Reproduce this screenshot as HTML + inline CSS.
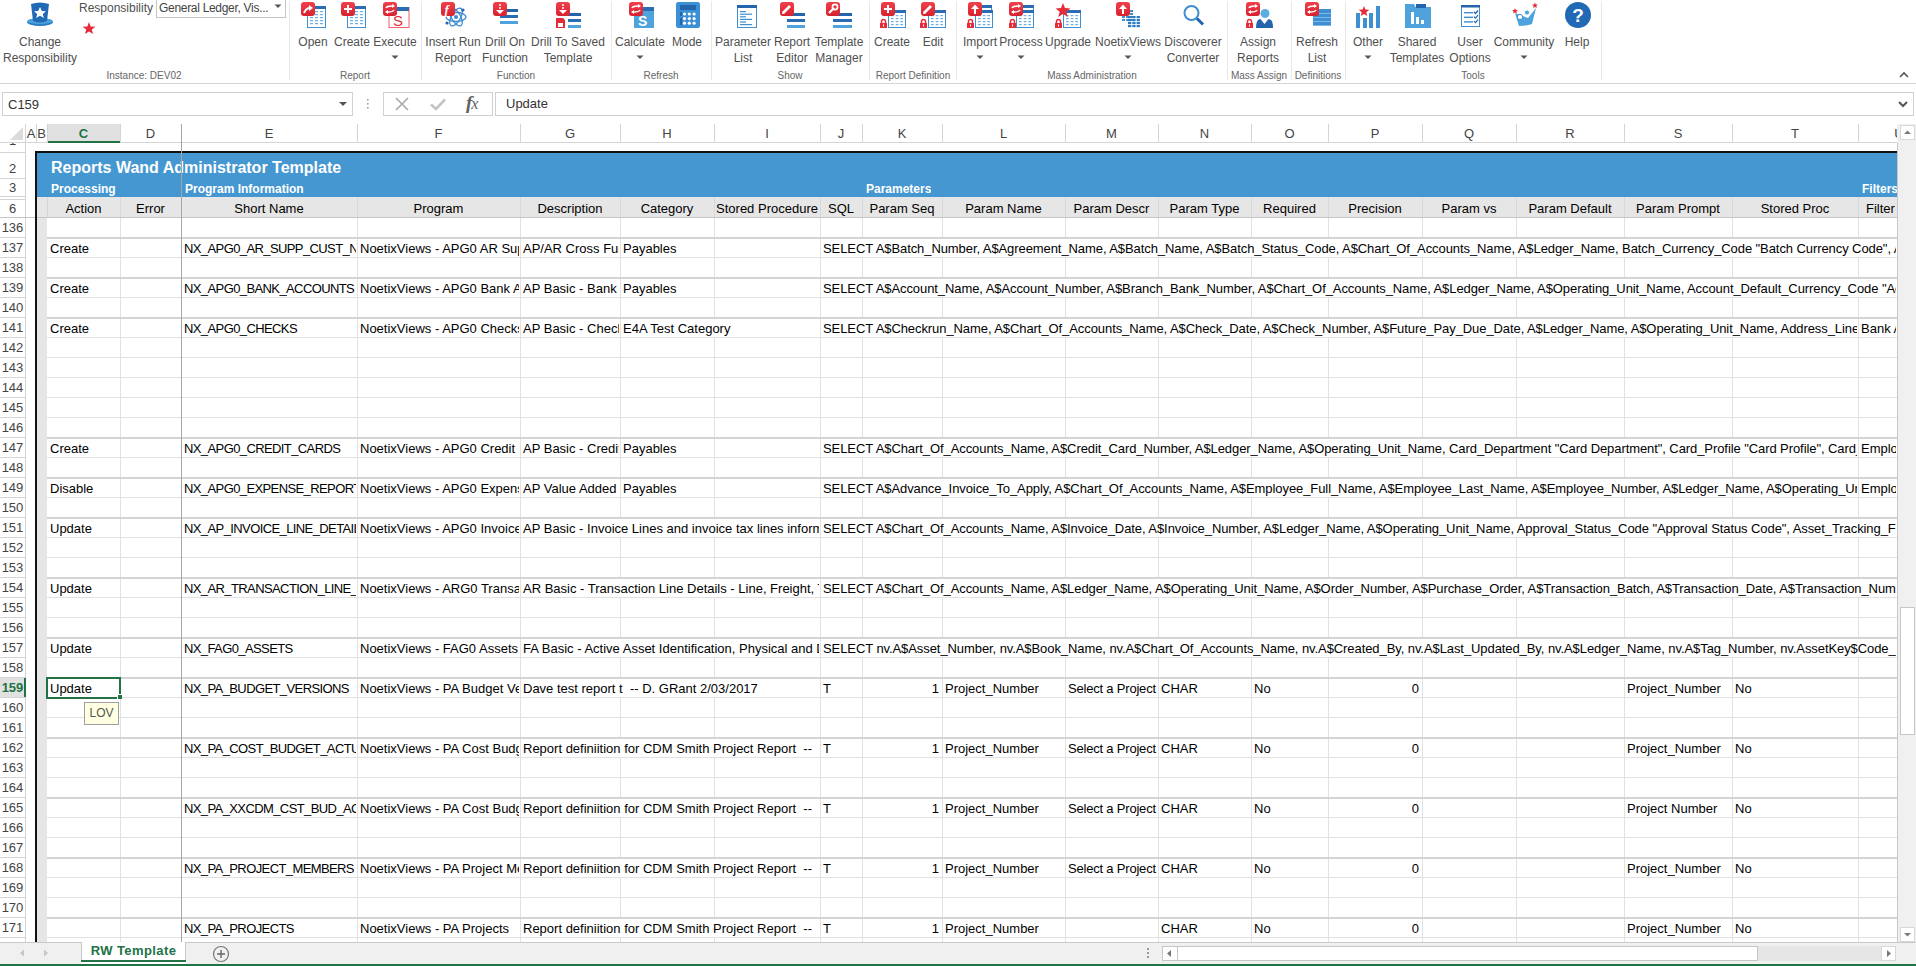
<!DOCTYPE html>
<html><head><meta charset="utf-8"><title>RW Template</title>
<style>
html,body{margin:0;padding:0;}
body{width:1916px;height:966px;position:relative;overflow:hidden;background:#fff;font-family:'Liberation Sans', sans-serif;}
</style></head><body>
<div style="position:absolute;left:0px;top:0px;width:1916px;height:83px;background:#fff"></div>
<div style="position:absolute;left:0px;top:83px;width:1916px;height:1px;background:#d5d5d5"></div>
<div style="position:absolute;left:289px;top:1px;width:1px;height:79px;background:#e8e8e8"></div>
<div style="position:absolute;left:421px;top:1px;width:1px;height:79px;background:#e8e8e8"></div>
<div style="position:absolute;left:611px;top:1px;width:1px;height:79px;background:#e8e8e8"></div>
<div style="position:absolute;left:711px;top:1px;width:1px;height:79px;background:#e8e8e8"></div>
<div style="position:absolute;left:869px;top:1px;width:1px;height:79px;background:#e8e8e8"></div>
<div style="position:absolute;left:956px;top:1px;width:1px;height:79px;background:#e8e8e8"></div>
<div style="position:absolute;left:1227px;top:1px;width:1px;height:79px;background:#e8e8e8"></div>
<div style="position:absolute;left:1291px;top:1px;width:1px;height:79px;background:#e8e8e8"></div>
<div style="position:absolute;left:1345px;top:1px;width:1px;height:79px;background:#e8e8e8"></div>
<div style="position:absolute;left:1601px;top:1px;width:1px;height:79px;background:#e8e8e8"></div>
<div style="position:absolute;left:-20px;top:34px;width:120px;text-align:center;font:12px/16px 'Liberation Sans', sans-serif;color:#505050;white-space:nowrap">Change</div>
<div style="position:absolute;left:-20px;top:50px;width:120px;text-align:center;font:12px/16px 'Liberation Sans', sans-serif;color:#505050;white-space:nowrap">Responsibility</div>
<div style="position:absolute;left:253px;top:34px;width:120px;text-align:center;font:12px/16px 'Liberation Sans', sans-serif;color:#505050;white-space:nowrap">Open</div>
<div style="position:absolute;left:292px;top:34px;width:120px;text-align:center;font:12px/16px 'Liberation Sans', sans-serif;color:#505050;white-space:nowrap">Create</div>
<div style="position:absolute;left:335px;top:34px;width:120px;text-align:center;font:12px/16px 'Liberation Sans', sans-serif;color:#505050;white-space:nowrap">Execute</div>
<svg style="position:absolute;left:391px;top:55px" width="8" height="5"><polygon points="0.5,0.5 7.5,0.5 4,4" fill="#555"/></svg>
<div style="position:absolute;left:393px;top:34px;width:120px;text-align:center;font:12px/16px 'Liberation Sans', sans-serif;color:#505050;white-space:nowrap">Insert Run</div>
<div style="position:absolute;left:393px;top:50px;width:120px;text-align:center;font:12px/16px 'Liberation Sans', sans-serif;color:#505050;white-space:nowrap">Report</div>
<div style="position:absolute;left:445px;top:34px;width:120px;text-align:center;font:12px/16px 'Liberation Sans', sans-serif;color:#505050;white-space:nowrap">Drill On</div>
<div style="position:absolute;left:445px;top:50px;width:120px;text-align:center;font:12px/16px 'Liberation Sans', sans-serif;color:#505050;white-space:nowrap">Function</div>
<div style="position:absolute;left:508px;top:34px;width:120px;text-align:center;font:12px/16px 'Liberation Sans', sans-serif;color:#505050;white-space:nowrap">Drill To Saved</div>
<div style="position:absolute;left:508px;top:50px;width:120px;text-align:center;font:12px/16px 'Liberation Sans', sans-serif;color:#505050;white-space:nowrap">Template</div>
<div style="position:absolute;left:580px;top:34px;width:120px;text-align:center;font:12px/16px 'Liberation Sans', sans-serif;color:#505050;white-space:nowrap">Calculate</div>
<svg style="position:absolute;left:636px;top:55px" width="8" height="5"><polygon points="0.5,0.5 7.5,0.5 4,4" fill="#555"/></svg>
<div style="position:absolute;left:627px;top:34px;width:120px;text-align:center;font:12px/16px 'Liberation Sans', sans-serif;color:#505050;white-space:nowrap">Mode</div>
<div style="position:absolute;left:683px;top:34px;width:120px;text-align:center;font:12px/16px 'Liberation Sans', sans-serif;color:#505050;white-space:nowrap">Parameter</div>
<div style="position:absolute;left:683px;top:50px;width:120px;text-align:center;font:12px/16px 'Liberation Sans', sans-serif;color:#505050;white-space:nowrap">List</div>
<div style="position:absolute;left:732px;top:34px;width:120px;text-align:center;font:12px/16px 'Liberation Sans', sans-serif;color:#505050;white-space:nowrap">Report</div>
<div style="position:absolute;left:732px;top:50px;width:120px;text-align:center;font:12px/16px 'Liberation Sans', sans-serif;color:#505050;white-space:nowrap">Editor</div>
<div style="position:absolute;left:779px;top:34px;width:120px;text-align:center;font:12px/16px 'Liberation Sans', sans-serif;color:#505050;white-space:nowrap">Template</div>
<div style="position:absolute;left:779px;top:50px;width:120px;text-align:center;font:12px/16px 'Liberation Sans', sans-serif;color:#505050;white-space:nowrap">Manager</div>
<div style="position:absolute;left:832px;top:34px;width:120px;text-align:center;font:12px/16px 'Liberation Sans', sans-serif;color:#505050;white-space:nowrap">Create</div>
<div style="position:absolute;left:873px;top:34px;width:120px;text-align:center;font:12px/16px 'Liberation Sans', sans-serif;color:#505050;white-space:nowrap">Edit</div>
<div style="position:absolute;left:920px;top:34px;width:120px;text-align:center;font:12px/16px 'Liberation Sans', sans-serif;color:#505050;white-space:nowrap">Import</div>
<svg style="position:absolute;left:976px;top:55px" width="8" height="5"><polygon points="0.5,0.5 7.5,0.5 4,4" fill="#555"/></svg>
<div style="position:absolute;left:961px;top:34px;width:120px;text-align:center;font:12px/16px 'Liberation Sans', sans-serif;color:#505050;white-space:nowrap">Process</div>
<svg style="position:absolute;left:1017px;top:55px" width="8" height="5"><polygon points="0.5,0.5 7.5,0.5 4,4" fill="#555"/></svg>
<div style="position:absolute;left:1008px;top:34px;width:120px;text-align:center;font:12px/16px 'Liberation Sans', sans-serif;color:#505050;white-space:nowrap">Upgrade</div>
<div style="position:absolute;left:1068px;top:34px;width:120px;text-align:center;font:12px/16px 'Liberation Sans', sans-serif;color:#505050;white-space:nowrap">NoetixViews</div>
<svg style="position:absolute;left:1124px;top:55px" width="8" height="5"><polygon points="0.5,0.5 7.5,0.5 4,4" fill="#555"/></svg>
<div style="position:absolute;left:1133px;top:34px;width:120px;text-align:center;font:12px/16px 'Liberation Sans', sans-serif;color:#505050;white-space:nowrap">Discoverer</div>
<div style="position:absolute;left:1133px;top:50px;width:120px;text-align:center;font:12px/16px 'Liberation Sans', sans-serif;color:#505050;white-space:nowrap">Converter</div>
<div style="position:absolute;left:1198px;top:34px;width:120px;text-align:center;font:12px/16px 'Liberation Sans', sans-serif;color:#505050;white-space:nowrap">Assign</div>
<div style="position:absolute;left:1198px;top:50px;width:120px;text-align:center;font:12px/16px 'Liberation Sans', sans-serif;color:#505050;white-space:nowrap">Reports</div>
<div style="position:absolute;left:1257px;top:34px;width:120px;text-align:center;font:12px/16px 'Liberation Sans', sans-serif;color:#505050;white-space:nowrap">Refresh</div>
<div style="position:absolute;left:1257px;top:50px;width:120px;text-align:center;font:12px/16px 'Liberation Sans', sans-serif;color:#505050;white-space:nowrap">List</div>
<div style="position:absolute;left:1308px;top:34px;width:120px;text-align:center;font:12px/16px 'Liberation Sans', sans-serif;color:#505050;white-space:nowrap">Other</div>
<svg style="position:absolute;left:1364px;top:55px" width="8" height="5"><polygon points="0.5,0.5 7.5,0.5 4,4" fill="#555"/></svg>
<div style="position:absolute;left:1357px;top:34px;width:120px;text-align:center;font:12px/16px 'Liberation Sans', sans-serif;color:#505050;white-space:nowrap">Shared</div>
<div style="position:absolute;left:1357px;top:50px;width:120px;text-align:center;font:12px/16px 'Liberation Sans', sans-serif;color:#505050;white-space:nowrap">Templates</div>
<div style="position:absolute;left:1410px;top:34px;width:120px;text-align:center;font:12px/16px 'Liberation Sans', sans-serif;color:#505050;white-space:nowrap">User</div>
<div style="position:absolute;left:1410px;top:50px;width:120px;text-align:center;font:12px/16px 'Liberation Sans', sans-serif;color:#505050;white-space:nowrap">Options</div>
<div style="position:absolute;left:1464px;top:34px;width:120px;text-align:center;font:12px/16px 'Liberation Sans', sans-serif;color:#505050;white-space:nowrap">Community</div>
<svg style="position:absolute;left:1520px;top:55px" width="8" height="5"><polygon points="0.5,0.5 7.5,0.5 4,4" fill="#555"/></svg>
<div style="position:absolute;left:1517px;top:34px;width:120px;text-align:center;font:12px/16px 'Liberation Sans', sans-serif;color:#505050;white-space:nowrap">Help</div>
<div style="position:absolute;left:64px;top:68px;width:160px;text-align:center;font:10px/16px 'Liberation Sans', sans-serif;color:#666;white-space:nowrap">Instance: DEV02</div>
<div style="position:absolute;left:275px;top:68px;width:160px;text-align:center;font:10px/16px 'Liberation Sans', sans-serif;color:#666;white-space:nowrap">Report</div>
<div style="position:absolute;left:436px;top:68px;width:160px;text-align:center;font:10px/16px 'Liberation Sans', sans-serif;color:#666;white-space:nowrap">Function</div>
<div style="position:absolute;left:581px;top:68px;width:160px;text-align:center;font:10px/16px 'Liberation Sans', sans-serif;color:#666;white-space:nowrap">Refresh</div>
<div style="position:absolute;left:710px;top:68px;width:160px;text-align:center;font:10px/16px 'Liberation Sans', sans-serif;color:#666;white-space:nowrap">Show</div>
<div style="position:absolute;left:833px;top:68px;width:160px;text-align:center;font:10px/16px 'Liberation Sans', sans-serif;color:#666;white-space:nowrap">Report Definition</div>
<div style="position:absolute;left:1012px;top:68px;width:160px;text-align:center;font:10px/16px 'Liberation Sans', sans-serif;color:#666;white-space:nowrap">Mass Administration</div>
<div style="position:absolute;left:1179px;top:68px;width:160px;text-align:center;font:10px/16px 'Liberation Sans', sans-serif;color:#666;white-space:nowrap">Mass Assign</div>
<div style="position:absolute;left:1238px;top:68px;width:160px;text-align:center;font:10px/16px 'Liberation Sans', sans-serif;color:#666;white-space:nowrap">Definitions</div>
<div style="position:absolute;left:1393px;top:68px;width:160px;text-align:center;font:10px/16px 'Liberation Sans', sans-serif;color:#666;white-space:nowrap">Tools</div>
<div style="position:absolute;left:79px;top:0px;font:12px/16px 'Liberation Sans', sans-serif;color:#505050;white-space:nowrap">Responsibility</div>
<div style="position:absolute;left:156px;top:0px;width:130px;height:18px;background:#fff;border:1px solid #c6c6c6;border-top:0;box-sizing:border-box"></div>
<div style="position:absolute;left:159px;top:0px;font:12px/16px 'Liberation Sans', sans-serif;color:#444;white-space:nowrap;letter-spacing:-0.3px">General Ledger, Vis...</div>
<svg style="position:absolute;left:274px;top:4px" width="8" height="5"><polygon points="0.5,0.5 7.5,0.5 4,4" fill="#555"/></svg>
<svg style="position:absolute;left:1897px;top:70px" width="14" height="10"><path d="M3 7 L7 3 L11 7" stroke="#555" stroke-width="1.6" fill="none"/></svg>
<svg style="position:absolute;left:0;top:0" width="1916" height="84"><defs><linearGradient id="rg" x1="0" y1="0" x2="0" y2="1"><stop offset="0" stop-color="#f0404c"/><stop offset="1" stop-color="#d8212f"/></linearGradient></defs><ellipse cx="40" cy="22" rx="13" ry="4" fill="#2a7cc4"/><ellipse cx="40" cy="21" rx="12.5" ry="3" fill="#4ba2dc"/><path d="M31 4 Q40 1 49 4 L47 21 Q40 24 33 21 Z" fill="#2168b5"/><polygon points="40,7 41.8,11 46,11.3 42.8,14 43.8,18 40,15.8 36.2,18 37.2,14 34,11.3 38.2,11" fill="#fff"/><polygon points="89,22 90.7,26.5 95.5,26.7 91.8,29.6 93,34 89,31.5 85,34 86.2,29.6 82.5,26.7 87.3,26.5" fill="#e42d3a"/><rect x="307.5" y="6.5" width="18" height="21" fill="#fff" stroke="#3f8fd2"/><rect x="307" y="6" width="19" height="3" fill="#2a6db5"/><rect x="310.0" y="11" width="3.0" height="1.2" fill="#6fb0e4"/><rect x="315.0" y="11" width="3.0" height="1.2" fill="#6fb0e4"/><rect x="320.0" y="11" width="3.0" height="1.2" fill="#6fb0e4"/><rect x="310.0" y="14" width="3.0" height="1.2" fill="#6fb0e4"/><rect x="315.0" y="14" width="3.0" height="1.2" fill="#6fb0e4"/><rect x="320.0" y="14" width="3.0" height="1.2" fill="#6fb0e4"/><rect x="310.0" y="17" width="3.0" height="1.2" fill="#6fb0e4"/><rect x="315.0" y="17" width="3.0" height="1.2" fill="#6fb0e4"/><rect x="320.0" y="17" width="3.0" height="1.2" fill="#6fb0e4"/><rect x="310.0" y="20" width="3.0" height="1.2" fill="#6fb0e4"/><rect x="315.0" y="20" width="3.0" height="1.2" fill="#6fb0e4"/><rect x="320.0" y="20" width="3.0" height="1.2" fill="#6fb0e4"/><rect x="310.0" y="23" width="3.0" height="1.2" fill="#6fb0e4"/><rect x="315.0" y="23" width="3.0" height="1.2" fill="#6fb0e4"/><rect x="320.0" y="23" width="3.0" height="1.2" fill="#6fb0e4"/><rect x="301" y="2" width="14" height="14" rx="3" fill="url(#rg)"/><path d="M304 13 Q306 8 310 8" stroke="#fff" stroke-width="2" fill="none"/><polygon points="309,5 313,8 309,11" fill="#fff"/><rect x="347.5" y="6.5" width="18" height="21" fill="#fff" stroke="#3f8fd2"/><rect x="347" y="6" width="19" height="3" fill="#2a6db5"/><rect x="350.0" y="11" width="3.0" height="1.2" fill="#6fb0e4"/><rect x="355.0" y="11" width="3.0" height="1.2" fill="#6fb0e4"/><rect x="360.0" y="11" width="3.0" height="1.2" fill="#6fb0e4"/><rect x="350.0" y="14" width="3.0" height="1.2" fill="#6fb0e4"/><rect x="355.0" y="14" width="3.0" height="1.2" fill="#6fb0e4"/><rect x="360.0" y="14" width="3.0" height="1.2" fill="#6fb0e4"/><rect x="350.0" y="17" width="3.0" height="1.2" fill="#6fb0e4"/><rect x="355.0" y="17" width="3.0" height="1.2" fill="#6fb0e4"/><rect x="360.0" y="17" width="3.0" height="1.2" fill="#6fb0e4"/><rect x="350.0" y="20" width="3.0" height="1.2" fill="#6fb0e4"/><rect x="355.0" y="20" width="3.0" height="1.2" fill="#6fb0e4"/><rect x="360.0" y="20" width="3.0" height="1.2" fill="#6fb0e4"/><rect x="350.0" y="23" width="3.0" height="1.2" fill="#6fb0e4"/><rect x="355.0" y="23" width="3.0" height="1.2" fill="#6fb0e4"/><rect x="360.0" y="23" width="3.0" height="1.2" fill="#6fb0e4"/><rect x="341" y="2" width="14" height="14" rx="3" fill="url(#rg)"/><path d="M348 5v8M344 9h8" stroke="#fff" stroke-width="2"/><rect x="389" y="7.5" width="20" height="20" fill="#fff" stroke="#f0606a"/><rect x="389" y="7" width="20" height="4" fill="#2a6db5"/><text x="393" y="26" font-family="Liberation Sans" font-size="15" fill="#e42d3a">S</text><rect x="383" y="2" width="14" height="14" rx="3" fill="url(#rg)"/><path d="M386 8 Q387 6 392 6" stroke="#fff" stroke-width="1.6" fill="none"/><polygon points="392,4 395,6 392,8" fill="#fff"/><path d="M394 10 Q393 12 388 12" stroke="#fff" stroke-width="1.6" fill="none"/><polygon points="388,10 385,12 388,14" fill="#fff"/><g fill="none" stroke="#3b8ad0" stroke-width="1.3"><ellipse cx="456" cy="17" rx="10" ry="4.5" transform="rotate(60 456 17)"/><ellipse cx="456" cy="17" rx="10" ry="4.5" transform="rotate(-60 456 17)"/><ellipse cx="456" cy="17" rx="10" ry="4.5"/></g><circle cx="456" cy="17" r="2" fill="#3b8ad0"/><circle cx="447" cy="23" r="1.6" fill="#2364ad"/><circle cx="463" cy="10" r="1.6" fill="#2364ad"/><rect x="441" y="2" width="14" height="14" rx="3" fill="url(#rg)"/><text x="444.5" y="14" font-family="Liberation Serif" font-style="italic" font-weight="bold" font-size="13" fill="#fff">f</text><rect x="500" y="9" width="18" height="3" fill="#2364ad"/><rect x="500" y="15" width="18" height="3" fill="#2a6db5"/><rect x="500" y="21" width="18" height="3" fill="#4ea3dc"/><rect x="493" y="2" width="14" height="14" rx="3" fill="url(#rg)"/><path d="M500 4v2M500 7v2" stroke="#fff" stroke-width="1.5"/><polygon points="496,10 504,10 500,14" fill="#fff"/><rect x="568" y="13" width="13" height="3" fill="#2364ad"/><rect x="568" y="19" width="13" height="3" fill="#2a6db5"/><rect x="568" y="25" width="13" height="3" fill="#4ea3dc"/><path d="M556 18 h7 l2 2 v8 h-9 z" fill="#e42d3a"/><rect x="558" y="23" width="5" height="4" fill="#fff"/><rect x="556" y="2" width="14" height="14" rx="3" fill="url(#rg)"/><path d="M563 4v2M563 7v2" stroke="#fff" stroke-width="1.5"/><polygon points="559,10 567,10 563,14" fill="#fff"/><rect x="634" y="7" width="20" height="21" fill="#4ea3dc"/><rect x="634" y="7" width="20" height="4" fill="#2a6db5"/><text x="638" y="26" font-family="Liberation Sans" font-weight="bold" font-size="14" fill="#fff">S</text><rect x="629" y="2" width="14" height="14" rx="3" fill="url(#rg)"/><path d="M632 8 Q633 6 638 6" stroke="#fff" stroke-width="1.6" fill="none"/><polygon points="638,4 641,6 638,8" fill="#fff"/><path d="M640 10 Q639 12 634 12" stroke="#fff" stroke-width="1.6" fill="none"/><polygon points="634,10 631,12 634,14" fill="#fff"/><rect x="676" y="2" width="24" height="26" rx="2.5" fill="#3b8fd4"/><rect x="680" y="5" width="16" height="5" fill="#2364ad"/><circle cx="684.5" cy="14.0" r="1.6" fill="#fff"/><circle cx="684.5" cy="18.6" r="1.6" fill="#fff"/><circle cx="684.5" cy="23.2" r="1.6" fill="#fff"/><circle cx="689.3" cy="14.0" r="1.6" fill="#fff"/><circle cx="689.3" cy="18.6" r="1.6" fill="#fff"/><circle cx="689.3" cy="23.2" r="1.6" fill="#fff"/><circle cx="694.1" cy="14.0" r="1.6" fill="#fff"/><circle cx="694.1" cy="18.6" r="1.6" fill="#fff"/><circle cx="694.1" cy="23.2" r="1.6" fill="#fff"/><rect x="680" y="12" width="2" height="4" fill="#2364ad"/><rect x="680" y="18" width="2" height="7" fill="#2364ad"/><rect x="737.5" y="5.5" width="19" height="22" fill="#fff" stroke="#3f8fd2"/><rect x="737" y="5" width="20" height="3" fill="#2364ad"/><rect x="740" y="11.0" width="6" height="1.2" fill="#3f8fd2"/><rect x="740" y="13.6" width="12" height="1.2" fill="#3f8fd2"/><rect x="740" y="16.2" width="6" height="1.2" fill="#3f8fd2"/><rect x="740" y="18.8" width="12" height="1.2" fill="#3f8fd2"/><rect x="740" y="21.4" width="6" height="1.2" fill="#3f8fd2"/><rect x="740" y="24.0" width="12" height="1.2" fill="#3f8fd2"/><rect x="787" y="13" width="18" height="3" fill="#2364ad"/><rect x="787" y="19" width="18" height="3" fill="#2a6db5"/><rect x="787" y="25" width="18" height="3" fill="#4ea3dc"/><rect x="780" y="2" width="14" height="14" rx="3" fill="url(#rg)"/><path d="M783 13 L790 6" stroke="#fff" stroke-width="2.6"/><polygon points="782,14 782.5,11.5 784.5,13.5" fill="#fff"/><rect x="833" y="13" width="19" height="3" fill="#2364ad"/><rect x="833" y="19" width="19" height="3" fill="#2a6db5"/><rect x="833" y="25" width="19" height="3" fill="#4ea3dc"/><rect x="826" y="2" width="14" height="14" rx="3" fill="url(#rg)"/><path d="M829 13 L834 8" stroke="#fff" stroke-width="2.2"/><circle cx="835" cy="7" r="2.6" fill="none" stroke="#fff" stroke-width="1.6"/><rect x="888.5" y="10.5" width="17" height="17" fill="#fff" stroke="#3f8fd2"/><rect x="888" y="10" width="18" height="3" fill="#2a6db5"/><rect x="891.0" y="15" width="2.7" height="1.2" fill="#6fb0e4"/><rect x="895.7" y="15" width="2.7" height="1.2" fill="#6fb0e4"/><rect x="900.3" y="15" width="2.7" height="1.2" fill="#6fb0e4"/><rect x="891.0" y="18" width="2.7" height="1.2" fill="#6fb0e4"/><rect x="895.7" y="18" width="2.7" height="1.2" fill="#6fb0e4"/><rect x="900.3" y="18" width="2.7" height="1.2" fill="#6fb0e4"/><rect x="891.0" y="21" width="2.7" height="1.2" fill="#6fb0e4"/><rect x="895.7" y="21" width="2.7" height="1.2" fill="#6fb0e4"/><rect x="900.3" y="21" width="2.7" height="1.2" fill="#6fb0e4"/><rect x="891.0" y="24" width="2.7" height="1.2" fill="#6fb0e4"/><rect x="895.7" y="24" width="2.7" height="1.2" fill="#6fb0e4"/><rect x="900.3" y="24" width="2.7" height="1.2" fill="#6fb0e4"/><path d="M881.5 23 v-1.5 a2 2 0 0 1 4 0 v1.5" stroke="#e42d3a" stroke-width="1.5" fill="none"/><rect x="880" y="23" width="7" height="5" fill="#e42d3a"/><rect x="883" y="24.5" width="1" height="2" fill="#fff"/><rect x="881" y="2" width="14" height="14" rx="3" fill="url(#rg)"/><path d="M888 5v8M884 9h8" stroke="#fff" stroke-width="2"/><rect x="928.5" y="10.5" width="17" height="17" fill="#fff" stroke="#3f8fd2"/><rect x="928" y="10" width="18" height="3" fill="#2a6db5"/><rect x="931.0" y="15" width="2.7" height="1.2" fill="#6fb0e4"/><rect x="935.7" y="15" width="2.7" height="1.2" fill="#6fb0e4"/><rect x="940.3" y="15" width="2.7" height="1.2" fill="#6fb0e4"/><rect x="931.0" y="18" width="2.7" height="1.2" fill="#6fb0e4"/><rect x="935.7" y="18" width="2.7" height="1.2" fill="#6fb0e4"/><rect x="940.3" y="18" width="2.7" height="1.2" fill="#6fb0e4"/><rect x="931.0" y="21" width="2.7" height="1.2" fill="#6fb0e4"/><rect x="935.7" y="21" width="2.7" height="1.2" fill="#6fb0e4"/><rect x="940.3" y="21" width="2.7" height="1.2" fill="#6fb0e4"/><rect x="931.0" y="24" width="2.7" height="1.2" fill="#6fb0e4"/><rect x="935.7" y="24" width="2.7" height="1.2" fill="#6fb0e4"/><rect x="940.3" y="24" width="2.7" height="1.2" fill="#6fb0e4"/><path d="M921.5 23 v-1.5 a2 2 0 0 1 4 0 v1.5" stroke="#e42d3a" stroke-width="1.5" fill="none"/><rect x="920" y="23" width="7" height="5" fill="#e42d3a"/><rect x="923" y="24.5" width="1" height="2" fill="#fff"/><rect x="921" y="2" width="14" height="14" rx="3" fill="url(#rg)"/><path d="M924 13 L931 6" stroke="#fff" stroke-width="2.6"/><polygon points="923,14 923.5,11.5 925.5,13.5" fill="#fff"/><rect x="978.5" y="5.5" width="13" height="9" fill="#fff" stroke="#3f8fd2"/><rect x="978" y="5" width="14" height="3" fill="#2a6db5"/><rect x="981.0" y="10" width="1.3" height="1.2" fill="#6fb0e4"/><rect x="984.3" y="10" width="1.3" height="1.2" fill="#6fb0e4"/><rect x="987.7" y="10" width="1.3" height="1.2" fill="#6fb0e4"/><rect x="975.5" y="10.5" width="17" height="17" fill="#fff" stroke="#3f8fd2"/><rect x="975" y="10" width="18" height="3" fill="#2a6db5"/><rect x="978.0" y="15" width="2.7" height="1.2" fill="#6fb0e4"/><rect x="982.7" y="15" width="2.7" height="1.2" fill="#6fb0e4"/><rect x="987.3" y="15" width="2.7" height="1.2" fill="#6fb0e4"/><rect x="978.0" y="18" width="2.7" height="1.2" fill="#6fb0e4"/><rect x="982.7" y="18" width="2.7" height="1.2" fill="#6fb0e4"/><rect x="987.3" y="18" width="2.7" height="1.2" fill="#6fb0e4"/><rect x="978.0" y="21" width="2.7" height="1.2" fill="#6fb0e4"/><rect x="982.7" y="21" width="2.7" height="1.2" fill="#6fb0e4"/><rect x="987.3" y="21" width="2.7" height="1.2" fill="#6fb0e4"/><rect x="978.0" y="24" width="2.7" height="1.2" fill="#6fb0e4"/><rect x="982.7" y="24" width="2.7" height="1.2" fill="#6fb0e4"/><rect x="987.3" y="24" width="2.7" height="1.2" fill="#6fb0e4"/><path d="M968.5 23 v-1.5 a2 2 0 0 1 4 0 v1.5" stroke="#e42d3a" stroke-width="1.5" fill="none"/><rect x="967" y="23" width="7" height="5" fill="#e42d3a"/><rect x="970" y="24.5" width="1" height="2" fill="#fff"/><rect x="968" y="2" width="14" height="14" rx="3" fill="url(#rg)"/><path d="M975 8v6" stroke="#fff" stroke-width="2"/><polygon points="971,9 979,9 975,4.5" fill="#fff"/><rect x="1020.5" y="5.5" width="13" height="9" fill="#fff" stroke="#3f8fd2"/><rect x="1020" y="5" width="14" height="3" fill="#2a6db5"/><rect x="1023.0" y="10" width="1.3" height="1.2" fill="#6fb0e4"/><rect x="1026.3" y="10" width="1.3" height="1.2" fill="#6fb0e4"/><rect x="1029.7" y="10" width="1.3" height="1.2" fill="#6fb0e4"/><rect x="1016.5" y="10.5" width="17" height="17" fill="#fff" stroke="#3f8fd2"/><rect x="1016" y="10" width="18" height="3" fill="#2a6db5"/><rect x="1019.0" y="15" width="2.7" height="1.2" fill="#6fb0e4"/><rect x="1023.7" y="15" width="2.7" height="1.2" fill="#6fb0e4"/><rect x="1028.3" y="15" width="2.7" height="1.2" fill="#6fb0e4"/><rect x="1019.0" y="18" width="2.7" height="1.2" fill="#6fb0e4"/><rect x="1023.7" y="18" width="2.7" height="1.2" fill="#6fb0e4"/><rect x="1028.3" y="18" width="2.7" height="1.2" fill="#6fb0e4"/><rect x="1019.0" y="21" width="2.7" height="1.2" fill="#6fb0e4"/><rect x="1023.7" y="21" width="2.7" height="1.2" fill="#6fb0e4"/><rect x="1028.3" y="21" width="2.7" height="1.2" fill="#6fb0e4"/><rect x="1019.0" y="24" width="2.7" height="1.2" fill="#6fb0e4"/><rect x="1023.7" y="24" width="2.7" height="1.2" fill="#6fb0e4"/><rect x="1028.3" y="24" width="2.7" height="1.2" fill="#6fb0e4"/><path d="M1010.5 23 v-1.5 a2 2 0 0 1 4 0 v1.5" stroke="#e42d3a" stroke-width="1.5" fill="none"/><rect x="1009" y="23" width="7" height="5" fill="#e42d3a"/><rect x="1012" y="24.5" width="1" height="2" fill="#fff"/><rect x="1009" y="2" width="14" height="14" rx="3" fill="url(#rg)"/><path d="M1012 8 Q1013 6 1018 6" stroke="#fff" stroke-width="1.6" fill="none"/><polygon points="1018,4 1021,6 1018,8" fill="#fff"/><path d="M1020 10 Q1019 12 1014 12" stroke="#fff" stroke-width="1.6" fill="none"/><polygon points="1014,10 1011,12 1014,14" fill="#fff"/><rect x="1063.5" y="10.5" width="17" height="17" fill="#fff" stroke="#3f8fd2"/><rect x="1063" y="10" width="18" height="3" fill="#2a6db5"/><rect x="1066.0" y="15" width="2.7" height="1.2" fill="#6fb0e4"/><rect x="1070.7" y="15" width="2.7" height="1.2" fill="#6fb0e4"/><rect x="1075.3" y="15" width="2.7" height="1.2" fill="#6fb0e4"/><rect x="1066.0" y="18" width="2.7" height="1.2" fill="#6fb0e4"/><rect x="1070.7" y="18" width="2.7" height="1.2" fill="#6fb0e4"/><rect x="1075.3" y="18" width="2.7" height="1.2" fill="#6fb0e4"/><rect x="1066.0" y="21" width="2.7" height="1.2" fill="#6fb0e4"/><rect x="1070.7" y="21" width="2.7" height="1.2" fill="#6fb0e4"/><rect x="1075.3" y="21" width="2.7" height="1.2" fill="#6fb0e4"/><rect x="1066.0" y="24" width="2.7" height="1.2" fill="#6fb0e4"/><rect x="1070.7" y="24" width="2.7" height="1.2" fill="#6fb0e4"/><rect x="1075.3" y="24" width="2.7" height="1.2" fill="#6fb0e4"/><path d="M1056.5 23 v-1.5 a2 2 0 0 1 4 0 v1.5" stroke="#e42d3a" stroke-width="1.5" fill="none"/><rect x="1055" y="23" width="7" height="5" fill="#e42d3a"/><rect x="1058" y="24.5" width="1" height="2" fill="#fff"/><polygon points="1063,3 1065,8 1070.5,8.5 1066.3,11.8 1067.8,17 1063,14 1058.2,17 1059.7,11.8 1055.5,8.5 1061,8" fill="#e42d3a"/><g fill="#3f8fd2"><rect x="1122" y="10" width="3" height="2" /><rect x="1122" y="13" width="3" height="2" /><rect x="1122" y="16" width="3" height="2" /><rect x="1122" y="19" width="3" height="2" /><rect x="1126" y="10" width="3" height="2" /><rect x="1126" y="13" width="3" height="2" /><rect x="1126" y="16" width="3" height="2" /><rect x="1126" y="19" width="3" height="2" /><rect x="1130" y="10" width="3" height="2" /><rect x="1130" y="13" width="3" height="2" /><rect x="1130" y="16" width="3" height="2" /><rect x="1130" y="19" width="3" height="2" /></g><g fill="#2a7cc4"><rect x="1128.0" y="16" width="3.3" height="2.2" /><rect x="1128.0" y="19" width="3.3" height="2.2" /><rect x="1128.0" y="22" width="3.3" height="2.2" /><rect x="1128.0" y="25" width="3.3" height="2.2" /><rect x="1132.3" y="16" width="3.3" height="2.2" /><rect x="1132.3" y="19" width="3.3" height="2.2" /><rect x="1132.3" y="22" width="3.3" height="2.2" /><rect x="1132.3" y="25" width="3.3" height="2.2" /><rect x="1136.6" y="16" width="3.3" height="2.2" /><rect x="1136.6" y="19" width="3.3" height="2.2" /><rect x="1136.6" y="22" width="3.3" height="2.2" /><rect x="1136.6" y="25" width="3.3" height="2.2" /></g><rect x="1116" y="2" width="14" height="14" rx="3" fill="url(#rg)"/><path d="M1123 8v6" stroke="#fff" stroke-width="2"/><polygon points="1119,9 1127,9 1123,4.5" fill="#fff"/><circle cx="1191.5" cy="13" r="7" fill="none" stroke="#3f8fd2" stroke-width="2"/><path d="M1197 18.5 L1203 24.5" stroke="#2364ad" stroke-width="3"/><circle cx="1265" cy="13.5" r="4.5" fill="#5aaee0"/><path d="M1256 28 Q1256 19 1260.5 19 L1264.5 24 L1268.5 19 Q1273 19 1273 28 Z" fill="#2364ad"/><path d="M1247.5 23 v-1.5 a2 2 0 0 1 4 0 v1.5" stroke="#e42d3a" stroke-width="1.5" fill="none"/><rect x="1246" y="23" width="7" height="5" fill="#e42d3a"/><rect x="1249" y="24.5" width="1" height="2" fill="#fff"/><rect x="1246" y="2" width="14" height="14" rx="3" fill="url(#rg)"/><path d="M1249 8 Q1250 6 1255 6" stroke="#fff" stroke-width="1.6" fill="none"/><polygon points="1255,4 1258,6 1255,8" fill="#fff"/><path d="M1257 10 Q1256 12 1251 12" stroke="#fff" stroke-width="1.6" fill="none"/><polygon points="1251,10 1248,12 1251,14" fill="#fff"/><rect x="1313" y="9" width="18" height="17" fill="#3f8fd2"/><rect x="1313" y="13" width="18" height="0.8" fill="#8cc4ec"/><rect x="1313" y="17" width="18" height="0.8" fill="#8cc4ec"/><rect x="1313" y="21" width="18" height="0.8" fill="#8cc4ec"/><rect x="1313" y="25" width="18" height="0.8" fill="#8cc4ec"/><rect x="1305" y="2" width="14" height="14" rx="3" fill="url(#rg)"/><path d="M1308 8 Q1309 6 1314 6" stroke="#fff" stroke-width="1.6" fill="none"/><polygon points="1314,4 1317,6 1314,8" fill="#fff"/><path d="M1316 10 Q1315 12 1310 12" stroke="#fff" stroke-width="1.6" fill="none"/><polygon points="1310,10 1307,12 1310,14" fill="#fff"/><rect x="1356" y="13" width="4" height="15" fill="#3f8fd2"/><rect x="1363" y="18" width="4" height="10" fill="#3f8fd2"/><rect x="1369" y="13" width="4" height="15" fill="#3f8fd2"/><rect x="1376" y="6" width="4" height="22" fill="#3f8fd2"/><polygon points="1364,6 1365.4,9.6 1369.3,9.8 1366.3,12.3 1367.3,16 1364,14 1360.7,16 1361.7,12.3 1358.7,9.8 1362.6,9.6" fill="#e42d3a"/><path d="M1405 4 h9 l1.5 3 h15.5 v21 h-26 z" fill="#4ea3dc"/><rect x="1416" y="4" width="10" height="4" fill="#2364ad"/><rect x="1411" y="12" width="3" height="12" fill="#fff"/><rect x="1416" y="17" width="3" height="7" fill="#fff"/><rect x="1421" y="20" width="3" height="4" fill="#fff"/><rect x="1461.5" y="5.5" width="18" height="21" fill="#fff" stroke="#3f8fd2"/><rect x="1461" y="5" width="19" height="2.5" fill="#2364ad"/><rect x="1464" y="12.0" width="9" height="1.4" fill="#3f8fd2"/><path d="M1474 12.0 l1.5 1.5 l2.5 -3" stroke="#2364ad" stroke-width="1.2" fill="none"/><rect x="1464" y="16.6" width="9" height="1.4" fill="#3f8fd2"/><path d="M1474 16.6 l1.5 1.5 l2.5 -3" stroke="#2364ad" stroke-width="1.2" fill="none"/><rect x="1464" y="21.2" width="9" height="1.4" fill="#3f8fd2"/><path d="M1474 21.2 l1.5 1.5 l2.5 -3" stroke="#2364ad" stroke-width="1.2" fill="none"/><path d="M1515 13 L1519 26 Q1527 26 1532 24 L1536 8 L1528 18 Z" fill="#4ea3dc"/><circle cx="1520" cy="17" r="2.6" fill="#fff" stroke="#3f8fd2"/><circle cx="1527" cy="12.5" r="2.6" fill="#4ea3dc" stroke="#fff"/><polygon points="1515,8 1515.8,10 1518,10.1 1516.3,11.5 1516.9,13.6 1515,12.5 1513.1,13.6 1513.7,11.5 1512,10.1 1514.2,10" fill="#e42d3a"/><polygon points="1535,2.5 1535.8,4.5 1538,4.6 1536.3,6 1536.9,8.1 1535,7 1533.1,8.1 1533.7,6 1532,4.6 1534.2,4.5" fill="#e42d3a"/><circle cx="1578" cy="15" r="13" fill="#2168b5"/><text x="1578" y="21.5" text-anchor="middle" font-family="Liberation Sans" font-weight="bold" font-size="19" fill="#fff">?</text></svg>
<div style="position:absolute;left:0px;top:84px;width:1916px;height:40px;background:#fff"></div>
<div style="position:absolute;left:2px;top:92px;width:351px;height:24px;background:#fff;border:1px solid #d0d0d0;box-sizing:border-box"></div>
<div style="position:absolute;left:8px;top:92px;height:24px;font:13px/24px 'Liberation Sans', sans-serif;color:#333"><span style="position:relative;top:1px">C159</span></div>
<svg style="position:absolute;left:337px;top:99px" width="12" height="10"><polygon points="2,3 10,3 6,7" fill="#555"/></svg>
<svg style="position:absolute;left:365px;top:96px" width="6" height="16"><rect x="2" y="3" width="1.6" height="1.6" fill="#a0a0a0"/><rect x="2" y="7" width="1.6" height="1.6" fill="#a0a0a0"/><rect x="2" y="11" width="1.6" height="1.6" fill="#a0a0a0"/></svg>
<div style="position:absolute;left:383px;top:92px;width:110px;height:24px;background:#fff;border:1px solid #d0d0d0;box-sizing:border-box"></div>
<svg style="position:absolute;left:383px;top:92px" width="110" height="24"><path d="M13 6 L25 18 M25 6 L13 18" stroke="#a8a8a8" stroke-width="1.6"/><path d="M48 12.5 L53 17 L62 7.5" stroke="#c4c4c4" stroke-width="2.6" fill="none"/></svg>
<div style="position:absolute;left:466px;top:92px;height:24px;font:italic bold 19px/24px 'Liberation Serif', serif;color:#606060;letter-spacing:-1px"><span style="position:relative;top:-1px">f<span style="font-size:16px;font-weight:normal">x</span></span></div>
<div style="position:absolute;left:495px;top:92px;width:1419px;height:24px;background:#fff;border:1px solid #d0d0d0;box-sizing:border-box"></div>
<div style="position:absolute;left:506px;top:92px;height:24px;font:13px/24px 'Liberation Sans', sans-serif;color:#333"><span style="position:relative;top:0px">Update</span></div>
<svg style="position:absolute;left:1896px;top:98px" width="14" height="12"><path d="M3 4 L7 8 L11 4" stroke="#555" stroke-width="2" fill="none"/></svg>
<div style="position:absolute;left:0;top:124px;width:1897px;height:19px;background:#fff"></div>
<svg style="position:absolute;left:0;top:124px" width="26" height="19"><polygon points="23,3 23,16 10,16" fill="#dcdcdc"/></svg>
<div style="position:absolute;left:47px;top:124px;width:73px;height:19px;background:#e1e1e1"></div>
<div style="position:absolute;left:47px;top:141px;width:73px;height:2px;background:#217346"></div>
<div style="position:absolute;left:36px;top:124px;width:1px;height:19px;background:#d4d4d4"></div>
<div style="position:absolute;left:47px;top:124px;width:1px;height:19px;background:#d4d4d4"></div>
<div style="position:absolute;left:120px;top:124px;width:1px;height:19px;background:#d4d4d4"></div>
<div style="position:absolute;left:181px;top:124px;width:1px;height:19px;background:#a0a0a0"></div>
<div style="position:absolute;left:357px;top:124px;width:1px;height:19px;background:#d4d4d4"></div>
<div style="position:absolute;left:520px;top:124px;width:1px;height:19px;background:#d4d4d4"></div>
<div style="position:absolute;left:620px;top:124px;width:1px;height:19px;background:#d4d4d4"></div>
<div style="position:absolute;left:714px;top:124px;width:1px;height:19px;background:#d4d4d4"></div>
<div style="position:absolute;left:820px;top:124px;width:1px;height:19px;background:#d4d4d4"></div>
<div style="position:absolute;left:862px;top:124px;width:1px;height:19px;background:#d4d4d4"></div>
<div style="position:absolute;left:942px;top:124px;width:1px;height:19px;background:#d4d4d4"></div>
<div style="position:absolute;left:1065px;top:124px;width:1px;height:19px;background:#d4d4d4"></div>
<div style="position:absolute;left:1158px;top:124px;width:1px;height:19px;background:#d4d4d4"></div>
<div style="position:absolute;left:1251px;top:124px;width:1px;height:19px;background:#d4d4d4"></div>
<div style="position:absolute;left:1328px;top:124px;width:1px;height:19px;background:#d4d4d4"></div>
<div style="position:absolute;left:1422px;top:124px;width:1px;height:19px;background:#d4d4d4"></div>
<div style="position:absolute;left:1516px;top:124px;width:1px;height:19px;background:#d4d4d4"></div>
<div style="position:absolute;left:1624px;top:124px;width:1px;height:19px;background:#d4d4d4"></div>
<div style="position:absolute;left:1732px;top:124px;width:1px;height:19px;background:#d4d4d4"></div>
<div style="position:absolute;left:1858px;top:124px;width:1px;height:19px;background:#d4d4d4"></div>
<div style="position:absolute;left:25px;top:124px;width:1px;height:19px;background:#d4d4d4"></div>
<div style="position:absolute;left:0px;top:142px;width:47px;height:1px;background:#d4d4d4"></div>
<div style="position:absolute;left:120px;top:142px;width:1777px;height:1px;background:#d4d4d4"></div>
<div style="position:absolute;left:26px;top:124px;width:10px;height:17px;line-height:19px;text-align:center;font:13px 'Liberation Sans', sans-serif;color:#444;overflow:hidden"><span style="position:relative;top:2px">A</span></div>
<div style="position:absolute;left:36px;top:124px;width:11px;height:17px;line-height:19px;text-align:center;font:13px 'Liberation Sans', sans-serif;color:#444;overflow:hidden"><span style="position:relative;top:2px">B</span></div>
<div style="position:absolute;left:47px;top:124px;width:73px;height:17px;line-height:19px;text-align:center;font:bold 13px 'Liberation Sans', sans-serif;color:#217346;overflow:hidden"><span style="position:relative;top:2px">C</span></div>
<div style="position:absolute;left:120px;top:124px;width:61px;height:17px;line-height:19px;text-align:center;font:13px 'Liberation Sans', sans-serif;color:#444;overflow:hidden"><span style="position:relative;top:2px">D</span></div>
<div style="position:absolute;left:181px;top:124px;width:176px;height:17px;line-height:19px;text-align:center;font:13px 'Liberation Sans', sans-serif;color:#444;overflow:hidden"><span style="position:relative;top:2px">E</span></div>
<div style="position:absolute;left:357px;top:124px;width:163px;height:17px;line-height:19px;text-align:center;font:13px 'Liberation Sans', sans-serif;color:#444;overflow:hidden"><span style="position:relative;top:2px">F</span></div>
<div style="position:absolute;left:520px;top:124px;width:100px;height:17px;line-height:19px;text-align:center;font:13px 'Liberation Sans', sans-serif;color:#444;overflow:hidden"><span style="position:relative;top:2px">G</span></div>
<div style="position:absolute;left:620px;top:124px;width:94px;height:17px;line-height:19px;text-align:center;font:13px 'Liberation Sans', sans-serif;color:#444;overflow:hidden"><span style="position:relative;top:2px">H</span></div>
<div style="position:absolute;left:714px;top:124px;width:106px;height:17px;line-height:19px;text-align:center;font:13px 'Liberation Sans', sans-serif;color:#444;overflow:hidden"><span style="position:relative;top:2px">I</span></div>
<div style="position:absolute;left:820px;top:124px;width:42px;height:17px;line-height:19px;text-align:center;font:13px 'Liberation Sans', sans-serif;color:#444;overflow:hidden"><span style="position:relative;top:2px">J</span></div>
<div style="position:absolute;left:862px;top:124px;width:80px;height:17px;line-height:19px;text-align:center;font:13px 'Liberation Sans', sans-serif;color:#444;overflow:hidden"><span style="position:relative;top:2px">K</span></div>
<div style="position:absolute;left:942px;top:124px;width:123px;height:17px;line-height:19px;text-align:center;font:13px 'Liberation Sans', sans-serif;color:#444;overflow:hidden"><span style="position:relative;top:2px">L</span></div>
<div style="position:absolute;left:1065px;top:124px;width:93px;height:17px;line-height:19px;text-align:center;font:13px 'Liberation Sans', sans-serif;color:#444;overflow:hidden"><span style="position:relative;top:2px">M</span></div>
<div style="position:absolute;left:1158px;top:124px;width:93px;height:17px;line-height:19px;text-align:center;font:13px 'Liberation Sans', sans-serif;color:#444;overflow:hidden"><span style="position:relative;top:2px">N</span></div>
<div style="position:absolute;left:1251px;top:124px;width:77px;height:17px;line-height:19px;text-align:center;font:13px 'Liberation Sans', sans-serif;color:#444;overflow:hidden"><span style="position:relative;top:2px">O</span></div>
<div style="position:absolute;left:1328px;top:124px;width:94px;height:17px;line-height:19px;text-align:center;font:13px 'Liberation Sans', sans-serif;color:#444;overflow:hidden"><span style="position:relative;top:2px">P</span></div>
<div style="position:absolute;left:1422px;top:124px;width:94px;height:17px;line-height:19px;text-align:center;font:13px 'Liberation Sans', sans-serif;color:#444;overflow:hidden"><span style="position:relative;top:2px">Q</span></div>
<div style="position:absolute;left:1516px;top:124px;width:108px;height:17px;line-height:19px;text-align:center;font:13px 'Liberation Sans', sans-serif;color:#444;overflow:hidden"><span style="position:relative;top:2px">R</span></div>
<div style="position:absolute;left:1624px;top:124px;width:108px;height:17px;line-height:19px;text-align:center;font:13px 'Liberation Sans', sans-serif;color:#444;overflow:hidden"><span style="position:relative;top:2px">S</span></div>
<div style="position:absolute;left:1732px;top:124px;width:126px;height:17px;line-height:19px;text-align:center;font:13px 'Liberation Sans', sans-serif;color:#444;overflow:hidden"><span style="position:relative;top:2px">T</span></div>
<div style="position:absolute;left:1858px;top:124px;width:39px;height:17px;overflow:hidden"><div style="position:absolute;left:1px;top:0;width:80px;line-height:19px;text-align:center;font:13px 'Liberation Sans', sans-serif;color:#444"><span style="position:relative;top:2px">U</span></div></div>
<div style="position:absolute;left:0px;top:143px;width:25px;height:799px;background:#fff"></div>
<div style="position:absolute;left:25px;top:143px;width:1px;height:799px;background:#d4d4d4"></div>
<div style="position:absolute;left:0;top:143px;width:25px;height:9px;overflow:hidden"><div style="position:absolute;left:0;top:-10px;width:25px;height:19px;line-height:19px;text-align:center;font:13px 'Liberation Sans', sans-serif;color:#444">1</div></div>
<div style="position:absolute;left:0px;top:152px;width:25px;height:1px;background:#d4d4d4"></div>
<div style="position:absolute;left:0;top:153px;width:25px;height:25px;"></div>
<div style="position:absolute;left:0;top:153px;width:25px;height:25px;line-height:25px;text-align:center;font:13px 'Liberation Sans', sans-serif;color:#444;overflow:hidden"><span style="position:relative;top:8px">2</span></div>
<div style="position:absolute;left:0px;top:178px;width:25px;height:1px;background:#d4d4d4"></div>
<div style="position:absolute;left:0;top:178px;width:25px;height:18px;"></div>
<div style="position:absolute;left:0;top:178px;width:25px;height:18px;line-height:18px;text-align:center;font:13px 'Liberation Sans', sans-serif;color:#444;overflow:hidden"><span style="position:relative;top:2px">3</span></div>
<div style="position:absolute;left:0px;top:196px;width:25px;height:1px;background:#d4d4d4"></div>
<div style="position:absolute;left:0px;top:199px;width:25px;height:1px;background:#d4d4d4"></div>
<div style="position:absolute;left:0;top:199px;width:25px;height:18px;"></div>
<div style="position:absolute;left:0;top:199px;width:25px;height:18px;line-height:18px;text-align:center;font:13px 'Liberation Sans', sans-serif;color:#444;overflow:hidden"><span style="position:relative;top:2px">6</span></div>
<div style="position:absolute;left:0;top:218px;width:25px;height:19px;"></div>
<div style="position:absolute;left:0;top:218px;width:25px;height:19px;line-height:19px;text-align:center;font:13px 'Liberation Sans', sans-serif;color:#444;overflow:hidden"><span style="position:relative;top:2px">136</span></div>
<div style="position:absolute;left:0px;top:237px;width:25px;height:1px;background:#d4d4d4"></div>
<div style="position:absolute;left:0;top:238px;width:25px;height:19px;"></div>
<div style="position:absolute;left:0;top:238px;width:25px;height:19px;line-height:19px;text-align:center;font:13px 'Liberation Sans', sans-serif;color:#444;overflow:hidden"><span style="position:relative;top:2px">137</span></div>
<div style="position:absolute;left:0px;top:257px;width:25px;height:1px;background:#d4d4d4"></div>
<div style="position:absolute;left:0;top:258px;width:25px;height:19px;"></div>
<div style="position:absolute;left:0;top:258px;width:25px;height:19px;line-height:19px;text-align:center;font:13px 'Liberation Sans', sans-serif;color:#444;overflow:hidden"><span style="position:relative;top:2px">138</span></div>
<div style="position:absolute;left:0px;top:277px;width:25px;height:1px;background:#d4d4d4"></div>
<div style="position:absolute;left:0;top:278px;width:25px;height:19px;"></div>
<div style="position:absolute;left:0;top:278px;width:25px;height:19px;line-height:19px;text-align:center;font:13px 'Liberation Sans', sans-serif;color:#444;overflow:hidden"><span style="position:relative;top:2px">139</span></div>
<div style="position:absolute;left:0px;top:297px;width:25px;height:1px;background:#d4d4d4"></div>
<div style="position:absolute;left:0;top:298px;width:25px;height:19px;"></div>
<div style="position:absolute;left:0;top:298px;width:25px;height:19px;line-height:19px;text-align:center;font:13px 'Liberation Sans', sans-serif;color:#444;overflow:hidden"><span style="position:relative;top:2px">140</span></div>
<div style="position:absolute;left:0px;top:317px;width:25px;height:1px;background:#d4d4d4"></div>
<div style="position:absolute;left:0;top:318px;width:25px;height:19px;"></div>
<div style="position:absolute;left:0;top:318px;width:25px;height:19px;line-height:19px;text-align:center;font:13px 'Liberation Sans', sans-serif;color:#444;overflow:hidden"><span style="position:relative;top:2px">141</span></div>
<div style="position:absolute;left:0px;top:337px;width:25px;height:1px;background:#d4d4d4"></div>
<div style="position:absolute;left:0;top:338px;width:25px;height:19px;"></div>
<div style="position:absolute;left:0;top:338px;width:25px;height:19px;line-height:19px;text-align:center;font:13px 'Liberation Sans', sans-serif;color:#444;overflow:hidden"><span style="position:relative;top:2px">142</span></div>
<div style="position:absolute;left:0px;top:357px;width:25px;height:1px;background:#d4d4d4"></div>
<div style="position:absolute;left:0;top:358px;width:25px;height:19px;"></div>
<div style="position:absolute;left:0;top:358px;width:25px;height:19px;line-height:19px;text-align:center;font:13px 'Liberation Sans', sans-serif;color:#444;overflow:hidden"><span style="position:relative;top:2px">143</span></div>
<div style="position:absolute;left:0px;top:377px;width:25px;height:1px;background:#d4d4d4"></div>
<div style="position:absolute;left:0;top:378px;width:25px;height:19px;"></div>
<div style="position:absolute;left:0;top:378px;width:25px;height:19px;line-height:19px;text-align:center;font:13px 'Liberation Sans', sans-serif;color:#444;overflow:hidden"><span style="position:relative;top:2px">144</span></div>
<div style="position:absolute;left:0px;top:397px;width:25px;height:1px;background:#d4d4d4"></div>
<div style="position:absolute;left:0;top:398px;width:25px;height:19px;"></div>
<div style="position:absolute;left:0;top:398px;width:25px;height:19px;line-height:19px;text-align:center;font:13px 'Liberation Sans', sans-serif;color:#444;overflow:hidden"><span style="position:relative;top:2px">145</span></div>
<div style="position:absolute;left:0px;top:417px;width:25px;height:1px;background:#d4d4d4"></div>
<div style="position:absolute;left:0;top:418px;width:25px;height:19px;"></div>
<div style="position:absolute;left:0;top:418px;width:25px;height:19px;line-height:19px;text-align:center;font:13px 'Liberation Sans', sans-serif;color:#444;overflow:hidden"><span style="position:relative;top:2px">146</span></div>
<div style="position:absolute;left:0px;top:437px;width:25px;height:1px;background:#d4d4d4"></div>
<div style="position:absolute;left:0;top:438px;width:25px;height:19px;"></div>
<div style="position:absolute;left:0;top:438px;width:25px;height:19px;line-height:19px;text-align:center;font:13px 'Liberation Sans', sans-serif;color:#444;overflow:hidden"><span style="position:relative;top:2px">147</span></div>
<div style="position:absolute;left:0px;top:457px;width:25px;height:1px;background:#d4d4d4"></div>
<div style="position:absolute;left:0;top:458px;width:25px;height:19px;"></div>
<div style="position:absolute;left:0;top:458px;width:25px;height:19px;line-height:19px;text-align:center;font:13px 'Liberation Sans', sans-serif;color:#444;overflow:hidden"><span style="position:relative;top:2px">148</span></div>
<div style="position:absolute;left:0px;top:477px;width:25px;height:1px;background:#d4d4d4"></div>
<div style="position:absolute;left:0;top:478px;width:25px;height:19px;"></div>
<div style="position:absolute;left:0;top:478px;width:25px;height:19px;line-height:19px;text-align:center;font:13px 'Liberation Sans', sans-serif;color:#444;overflow:hidden"><span style="position:relative;top:2px">149</span></div>
<div style="position:absolute;left:0px;top:497px;width:25px;height:1px;background:#d4d4d4"></div>
<div style="position:absolute;left:0;top:498px;width:25px;height:19px;"></div>
<div style="position:absolute;left:0;top:498px;width:25px;height:19px;line-height:19px;text-align:center;font:13px 'Liberation Sans', sans-serif;color:#444;overflow:hidden"><span style="position:relative;top:2px">150</span></div>
<div style="position:absolute;left:0px;top:517px;width:25px;height:1px;background:#d4d4d4"></div>
<div style="position:absolute;left:0;top:518px;width:25px;height:19px;"></div>
<div style="position:absolute;left:0;top:518px;width:25px;height:19px;line-height:19px;text-align:center;font:13px 'Liberation Sans', sans-serif;color:#444;overflow:hidden"><span style="position:relative;top:2px">151</span></div>
<div style="position:absolute;left:0px;top:537px;width:25px;height:1px;background:#d4d4d4"></div>
<div style="position:absolute;left:0;top:538px;width:25px;height:19px;"></div>
<div style="position:absolute;left:0;top:538px;width:25px;height:19px;line-height:19px;text-align:center;font:13px 'Liberation Sans', sans-serif;color:#444;overflow:hidden"><span style="position:relative;top:2px">152</span></div>
<div style="position:absolute;left:0px;top:557px;width:25px;height:1px;background:#d4d4d4"></div>
<div style="position:absolute;left:0;top:558px;width:25px;height:19px;"></div>
<div style="position:absolute;left:0;top:558px;width:25px;height:19px;line-height:19px;text-align:center;font:13px 'Liberation Sans', sans-serif;color:#444;overflow:hidden"><span style="position:relative;top:2px">153</span></div>
<div style="position:absolute;left:0px;top:577px;width:25px;height:1px;background:#d4d4d4"></div>
<div style="position:absolute;left:0;top:578px;width:25px;height:19px;"></div>
<div style="position:absolute;left:0;top:578px;width:25px;height:19px;line-height:19px;text-align:center;font:13px 'Liberation Sans', sans-serif;color:#444;overflow:hidden"><span style="position:relative;top:2px">154</span></div>
<div style="position:absolute;left:0px;top:597px;width:25px;height:1px;background:#d4d4d4"></div>
<div style="position:absolute;left:0;top:598px;width:25px;height:19px;"></div>
<div style="position:absolute;left:0;top:598px;width:25px;height:19px;line-height:19px;text-align:center;font:13px 'Liberation Sans', sans-serif;color:#444;overflow:hidden"><span style="position:relative;top:2px">155</span></div>
<div style="position:absolute;left:0px;top:617px;width:25px;height:1px;background:#d4d4d4"></div>
<div style="position:absolute;left:0;top:618px;width:25px;height:19px;"></div>
<div style="position:absolute;left:0;top:618px;width:25px;height:19px;line-height:19px;text-align:center;font:13px 'Liberation Sans', sans-serif;color:#444;overflow:hidden"><span style="position:relative;top:2px">156</span></div>
<div style="position:absolute;left:0px;top:637px;width:25px;height:1px;background:#d4d4d4"></div>
<div style="position:absolute;left:0;top:638px;width:25px;height:19px;"></div>
<div style="position:absolute;left:0;top:638px;width:25px;height:19px;line-height:19px;text-align:center;font:13px 'Liberation Sans', sans-serif;color:#444;overflow:hidden"><span style="position:relative;top:2px">157</span></div>
<div style="position:absolute;left:0px;top:657px;width:25px;height:1px;background:#d4d4d4"></div>
<div style="position:absolute;left:0;top:658px;width:25px;height:19px;"></div>
<div style="position:absolute;left:0;top:658px;width:25px;height:19px;line-height:19px;text-align:center;font:13px 'Liberation Sans', sans-serif;color:#444;overflow:hidden"><span style="position:relative;top:2px">158</span></div>
<div style="position:absolute;left:0px;top:677px;width:25px;height:1px;background:#d4d4d4"></div>
<div style="position:absolute;left:0;top:678px;width:25px;height:19px;background:#e1e1e1;"></div>
<div style="position:absolute;left:0;top:678px;width:25px;height:19px;line-height:19px;text-align:center;font:bold 13px 'Liberation Sans', sans-serif;color:#217346;overflow:hidden"><span style="position:relative;top:2px">159</span></div>
<div style="position:absolute;left:0px;top:697px;width:25px;height:1px;background:#d4d4d4"></div>
<div style="position:absolute;left:0;top:698px;width:25px;height:19px;"></div>
<div style="position:absolute;left:0;top:698px;width:25px;height:19px;line-height:19px;text-align:center;font:13px 'Liberation Sans', sans-serif;color:#444;overflow:hidden"><span style="position:relative;top:2px">160</span></div>
<div style="position:absolute;left:0px;top:717px;width:25px;height:1px;background:#d4d4d4"></div>
<div style="position:absolute;left:0;top:718px;width:25px;height:19px;"></div>
<div style="position:absolute;left:0;top:718px;width:25px;height:19px;line-height:19px;text-align:center;font:13px 'Liberation Sans', sans-serif;color:#444;overflow:hidden"><span style="position:relative;top:2px">161</span></div>
<div style="position:absolute;left:0px;top:737px;width:25px;height:1px;background:#d4d4d4"></div>
<div style="position:absolute;left:0;top:738px;width:25px;height:19px;"></div>
<div style="position:absolute;left:0;top:738px;width:25px;height:19px;line-height:19px;text-align:center;font:13px 'Liberation Sans', sans-serif;color:#444;overflow:hidden"><span style="position:relative;top:2px">162</span></div>
<div style="position:absolute;left:0px;top:757px;width:25px;height:1px;background:#d4d4d4"></div>
<div style="position:absolute;left:0;top:758px;width:25px;height:19px;"></div>
<div style="position:absolute;left:0;top:758px;width:25px;height:19px;line-height:19px;text-align:center;font:13px 'Liberation Sans', sans-serif;color:#444;overflow:hidden"><span style="position:relative;top:2px">163</span></div>
<div style="position:absolute;left:0px;top:777px;width:25px;height:1px;background:#d4d4d4"></div>
<div style="position:absolute;left:0;top:778px;width:25px;height:19px;"></div>
<div style="position:absolute;left:0;top:778px;width:25px;height:19px;line-height:19px;text-align:center;font:13px 'Liberation Sans', sans-serif;color:#444;overflow:hidden"><span style="position:relative;top:2px">164</span></div>
<div style="position:absolute;left:0px;top:797px;width:25px;height:1px;background:#d4d4d4"></div>
<div style="position:absolute;left:0;top:798px;width:25px;height:19px;"></div>
<div style="position:absolute;left:0;top:798px;width:25px;height:19px;line-height:19px;text-align:center;font:13px 'Liberation Sans', sans-serif;color:#444;overflow:hidden"><span style="position:relative;top:2px">165</span></div>
<div style="position:absolute;left:0px;top:817px;width:25px;height:1px;background:#d4d4d4"></div>
<div style="position:absolute;left:0;top:818px;width:25px;height:19px;"></div>
<div style="position:absolute;left:0;top:818px;width:25px;height:19px;line-height:19px;text-align:center;font:13px 'Liberation Sans', sans-serif;color:#444;overflow:hidden"><span style="position:relative;top:2px">166</span></div>
<div style="position:absolute;left:0px;top:837px;width:25px;height:1px;background:#d4d4d4"></div>
<div style="position:absolute;left:0;top:838px;width:25px;height:19px;"></div>
<div style="position:absolute;left:0;top:838px;width:25px;height:19px;line-height:19px;text-align:center;font:13px 'Liberation Sans', sans-serif;color:#444;overflow:hidden"><span style="position:relative;top:2px">167</span></div>
<div style="position:absolute;left:0px;top:857px;width:25px;height:1px;background:#d4d4d4"></div>
<div style="position:absolute;left:0;top:858px;width:25px;height:19px;"></div>
<div style="position:absolute;left:0;top:858px;width:25px;height:19px;line-height:19px;text-align:center;font:13px 'Liberation Sans', sans-serif;color:#444;overflow:hidden"><span style="position:relative;top:2px">168</span></div>
<div style="position:absolute;left:0px;top:877px;width:25px;height:1px;background:#d4d4d4"></div>
<div style="position:absolute;left:0;top:878px;width:25px;height:19px;"></div>
<div style="position:absolute;left:0;top:878px;width:25px;height:19px;line-height:19px;text-align:center;font:13px 'Liberation Sans', sans-serif;color:#444;overflow:hidden"><span style="position:relative;top:2px">169</span></div>
<div style="position:absolute;left:0px;top:897px;width:25px;height:1px;background:#d4d4d4"></div>
<div style="position:absolute;left:0;top:898px;width:25px;height:19px;"></div>
<div style="position:absolute;left:0;top:898px;width:25px;height:19px;line-height:19px;text-align:center;font:13px 'Liberation Sans', sans-serif;color:#444;overflow:hidden"><span style="position:relative;top:2px">170</span></div>
<div style="position:absolute;left:0px;top:917px;width:25px;height:1px;background:#d4d4d4"></div>
<div style="position:absolute;left:0;top:918px;width:25px;height:19px;"></div>
<div style="position:absolute;left:0;top:918px;width:25px;height:19px;line-height:19px;text-align:center;font:13px 'Liberation Sans', sans-serif;color:#444;overflow:hidden"><span style="position:relative;top:2px">171</span></div>
<div style="position:absolute;left:0px;top:937px;width:25px;height:1px;background:#d4d4d4"></div>
<div style="position:absolute;left:0px;top:957px;width:25px;height:1px;background:#d4d4d4"></div>
<div style="position:absolute;left:24px;top:678px;width:2px;height:19px;background:#217346"></div>
<div style="position:absolute;left:26px;top:143px;width:1871px;height:799px;background:#fff"></div>
<div style="position:absolute;left:35px;top:151px;width:1862px;height:2px;background:#111"></div>
<div style="position:absolute;left:35px;top:151px;width:2px;height:791px;background:#111"></div>
<div style="position:absolute;left:37px;top:153px;width:1860px;height:44px;background:#4597d1"></div>
<div style="position:absolute;left:37px;top:197px;width:1860px;height:20px;background:#e7e6e6"></div>
<div style="position:absolute;left:37px;top:217px;width:10px;height:725px;background:#e7e6e6"></div>
<div style="position:absolute;left:120px;top:197px;width:1px;height:20px;background:#d9d9d9"></div>
<div style="position:absolute;left:181px;top:197px;width:1px;height:20px;background:#d9d9d9"></div>
<div style="position:absolute;left:357px;top:197px;width:1px;height:20px;background:#d9d9d9"></div>
<div style="position:absolute;left:520px;top:197px;width:1px;height:20px;background:#d9d9d9"></div>
<div style="position:absolute;left:620px;top:197px;width:1px;height:20px;background:#d9d9d9"></div>
<div style="position:absolute;left:714px;top:197px;width:1px;height:20px;background:#d9d9d9"></div>
<div style="position:absolute;left:820px;top:197px;width:1px;height:20px;background:#d9d9d9"></div>
<div style="position:absolute;left:862px;top:197px;width:1px;height:20px;background:#d9d9d9"></div>
<div style="position:absolute;left:942px;top:197px;width:1px;height:20px;background:#d9d9d9"></div>
<div style="position:absolute;left:1065px;top:197px;width:1px;height:20px;background:#d9d9d9"></div>
<div style="position:absolute;left:1158px;top:197px;width:1px;height:20px;background:#d9d9d9"></div>
<div style="position:absolute;left:1251px;top:197px;width:1px;height:20px;background:#d9d9d9"></div>
<div style="position:absolute;left:1328px;top:197px;width:1px;height:20px;background:#d9d9d9"></div>
<div style="position:absolute;left:1422px;top:197px;width:1px;height:20px;background:#d9d9d9"></div>
<div style="position:absolute;left:1516px;top:197px;width:1px;height:20px;background:#d9d9d9"></div>
<div style="position:absolute;left:1624px;top:197px;width:1px;height:20px;background:#d9d9d9"></div>
<div style="position:absolute;left:1732px;top:197px;width:1px;height:20px;background:#d9d9d9"></div>
<div style="position:absolute;left:1858px;top:197px;width:1px;height:20px;background:#d9d9d9"></div>
<div style="position:absolute;left:47px;top:197px;width:1px;height:20px;background:#d6d6d6"></div>
<div style="position:absolute;left:120px;top:218px;width:1px;height:724px;background:#e1e1e1"></div>
<div style="position:absolute;left:181px;top:218px;width:1px;height:724px;background:#e1e1e1"></div>
<div style="position:absolute;left:357px;top:218px;width:1px;height:724px;background:#e1e1e1"></div>
<div style="position:absolute;left:520px;top:218px;width:1px;height:724px;background:#e1e1e1"></div>
<div style="position:absolute;left:620px;top:218px;width:1px;height:724px;background:#e1e1e1"></div>
<div style="position:absolute;left:714px;top:218px;width:1px;height:724px;background:#e1e1e1"></div>
<div style="position:absolute;left:820px;top:218px;width:1px;height:724px;background:#e1e1e1"></div>
<div style="position:absolute;left:862px;top:218px;width:1px;height:724px;background:#e1e1e1"></div>
<div style="position:absolute;left:942px;top:218px;width:1px;height:724px;background:#e1e1e1"></div>
<div style="position:absolute;left:1065px;top:218px;width:1px;height:724px;background:#e1e1e1"></div>
<div style="position:absolute;left:1158px;top:218px;width:1px;height:724px;background:#e1e1e1"></div>
<div style="position:absolute;left:1251px;top:218px;width:1px;height:724px;background:#e1e1e1"></div>
<div style="position:absolute;left:1328px;top:218px;width:1px;height:724px;background:#e1e1e1"></div>
<div style="position:absolute;left:1422px;top:218px;width:1px;height:724px;background:#e1e1e1"></div>
<div style="position:absolute;left:1516px;top:218px;width:1px;height:724px;background:#e1e1e1"></div>
<div style="position:absolute;left:1624px;top:218px;width:1px;height:724px;background:#e1e1e1"></div>
<div style="position:absolute;left:1732px;top:218px;width:1px;height:724px;background:#e1e1e1"></div>
<div style="position:absolute;left:1858px;top:218px;width:1px;height:724px;background:#e1e1e1"></div>
<div style="position:absolute;left:47px;top:237px;width:1850px;height:1px;background:#e1e1e1"></div>
<div style="position:absolute;left:47px;top:237px;width:1850px;height:2px;background:#d4d4d4"></div>
<div style="position:absolute;left:47px;top:257px;width:1850px;height:1px;background:#e1e1e1"></div>
<div style="position:absolute;left:47px;top:277px;width:1850px;height:1px;background:#e1e1e1"></div>
<div style="position:absolute;left:47px;top:277px;width:1850px;height:2px;background:#d4d4d4"></div>
<div style="position:absolute;left:47px;top:297px;width:1850px;height:1px;background:#e1e1e1"></div>
<div style="position:absolute;left:47px;top:317px;width:1850px;height:1px;background:#e1e1e1"></div>
<div style="position:absolute;left:47px;top:317px;width:1850px;height:2px;background:#d4d4d4"></div>
<div style="position:absolute;left:47px;top:337px;width:1850px;height:1px;background:#e1e1e1"></div>
<div style="position:absolute;left:47px;top:357px;width:1850px;height:1px;background:#e1e1e1"></div>
<div style="position:absolute;left:47px;top:377px;width:1850px;height:1px;background:#e1e1e1"></div>
<div style="position:absolute;left:47px;top:397px;width:1850px;height:1px;background:#e1e1e1"></div>
<div style="position:absolute;left:47px;top:417px;width:1850px;height:1px;background:#e1e1e1"></div>
<div style="position:absolute;left:47px;top:437px;width:1850px;height:1px;background:#e1e1e1"></div>
<div style="position:absolute;left:47px;top:437px;width:1850px;height:2px;background:#d4d4d4"></div>
<div style="position:absolute;left:47px;top:457px;width:1850px;height:1px;background:#e1e1e1"></div>
<div style="position:absolute;left:47px;top:477px;width:1850px;height:1px;background:#e1e1e1"></div>
<div style="position:absolute;left:47px;top:477px;width:1850px;height:2px;background:#d4d4d4"></div>
<div style="position:absolute;left:47px;top:497px;width:1850px;height:1px;background:#e1e1e1"></div>
<div style="position:absolute;left:47px;top:517px;width:1850px;height:1px;background:#e1e1e1"></div>
<div style="position:absolute;left:47px;top:517px;width:1850px;height:2px;background:#d4d4d4"></div>
<div style="position:absolute;left:47px;top:537px;width:1850px;height:1px;background:#e1e1e1"></div>
<div style="position:absolute;left:47px;top:557px;width:1850px;height:1px;background:#e1e1e1"></div>
<div style="position:absolute;left:47px;top:577px;width:1850px;height:1px;background:#e1e1e1"></div>
<div style="position:absolute;left:47px;top:577px;width:1850px;height:2px;background:#d4d4d4"></div>
<div style="position:absolute;left:47px;top:597px;width:1850px;height:1px;background:#e1e1e1"></div>
<div style="position:absolute;left:47px;top:617px;width:1850px;height:1px;background:#e1e1e1"></div>
<div style="position:absolute;left:47px;top:637px;width:1850px;height:1px;background:#e1e1e1"></div>
<div style="position:absolute;left:47px;top:637px;width:1850px;height:2px;background:#d4d4d4"></div>
<div style="position:absolute;left:47px;top:657px;width:1850px;height:1px;background:#e1e1e1"></div>
<div style="position:absolute;left:47px;top:677px;width:1850px;height:1px;background:#e1e1e1"></div>
<div style="position:absolute;left:47px;top:677px;width:1850px;height:2px;background:#d4d4d4"></div>
<div style="position:absolute;left:47px;top:697px;width:1850px;height:1px;background:#e1e1e1"></div>
<div style="position:absolute;left:47px;top:717px;width:1850px;height:1px;background:#e1e1e1"></div>
<div style="position:absolute;left:47px;top:737px;width:1850px;height:1px;background:#e1e1e1"></div>
<div style="position:absolute;left:47px;top:737px;width:1850px;height:2px;background:#d4d4d4"></div>
<div style="position:absolute;left:47px;top:757px;width:1850px;height:1px;background:#e1e1e1"></div>
<div style="position:absolute;left:47px;top:777px;width:1850px;height:1px;background:#e1e1e1"></div>
<div style="position:absolute;left:47px;top:797px;width:1850px;height:1px;background:#e1e1e1"></div>
<div style="position:absolute;left:47px;top:797px;width:1850px;height:2px;background:#d4d4d4"></div>
<div style="position:absolute;left:47px;top:817px;width:1850px;height:1px;background:#e1e1e1"></div>
<div style="position:absolute;left:47px;top:837px;width:1850px;height:1px;background:#e1e1e1"></div>
<div style="position:absolute;left:47px;top:857px;width:1850px;height:1px;background:#e1e1e1"></div>
<div style="position:absolute;left:47px;top:857px;width:1850px;height:2px;background:#d4d4d4"></div>
<div style="position:absolute;left:47px;top:877px;width:1850px;height:1px;background:#e1e1e1"></div>
<div style="position:absolute;left:47px;top:897px;width:1850px;height:1px;background:#e1e1e1"></div>
<div style="position:absolute;left:47px;top:917px;width:1850px;height:1px;background:#e1e1e1"></div>
<div style="position:absolute;left:47px;top:917px;width:1850px;height:2px;background:#d4d4d4"></div>
<div style="position:absolute;left:47px;top:937px;width:1850px;height:1px;background:#e1e1e1"></div>
<div style="position:absolute;left:47px;top:957px;width:1850px;height:1px;background:#e1e1e1"></div>
<div style="position:absolute;left:0px;top:217px;width:1897px;height:1px;background:#c4c4c4"></div>
<div style="position:absolute;left:35px;top:151px;width:2px;height:791px;background:#111"></div>
<div style="position:absolute;left:47px;top:239px;width:130px;height:18px;padding-left:3px;overflow:hidden;white-space:pre;font:13px/18px 'Liberation Sans', sans-serif;color:#000;"><span style="display:inline-block;height:18px;background:#fff"><span style="position:relative;top:1px">Create</span></span></div>
<div style="position:absolute;left:181px;top:239px;width:172px;height:18px;padding-left:3px;overflow:hidden;white-space:pre;font:13px/18px 'Liberation Sans', sans-serif;color:#000;letter-spacing:-0.6px;"><span style="display:inline-block;height:18px;background:#fff"><span style="position:relative;top:1px">NX_APG0_AR_SUPP_CUST_NAMES</span></span></div>
<div style="position:absolute;left:357px;top:239px;width:159px;height:18px;padding-left:3px;overflow:hidden;white-space:pre;font:13px/18px 'Liberation Sans', sans-serif;color:#000;"><span style="display:inline-block;height:18px;background:#fff"><span style="position:relative;top:1px">NoetixViews - APG0 AR Supplier Customers</span></span></div>
<div style="position:absolute;left:520px;top:239px;width:96px;height:18px;padding-left:3px;overflow:hidden;white-space:pre;font:13px/18px 'Liberation Sans', sans-serif;color:#000;"><span style="display:inline-block;height:18px;background:#fff"><span style="position:relative;top:1px">AP/AR Cross Functional</span></span></div>
<div style="position:absolute;left:620px;top:239px;width:196px;height:18px;padding-left:3px;overflow:hidden;white-space:pre;font:13px/18px 'Liberation Sans', sans-serif;color:#000;"><span style="display:inline-block;height:18px;background:#fff"><span style="position:relative;top:1px">Payables</span></span></div>
<div style="position:absolute;left:820px;top:239px;width:1073px;height:18px;padding-left:3px;overflow:hidden;white-space:pre;font:13px/18px 'Liberation Sans', sans-serif;color:#000;letter-spacing:-0.08px;"><span style="display:inline-block;height:18px;background:#fff"><span style="position:relative;top:1px">SELECT A$Batch_Number, A$Agreement_Name, A$Batch_Name, A$Batch_Status_Code, A$Chart_Of_Accounts_Name, A$Ledger_Name, Batch_Currency_Code &quot;Batch Currency Code&quot;, A$Batch</span></span></div>
<div style="position:absolute;left:47px;top:279px;width:130px;height:18px;padding-left:3px;overflow:hidden;white-space:pre;font:13px/18px 'Liberation Sans', sans-serif;color:#000;"><span style="display:inline-block;height:18px;background:#fff"><span style="position:relative;top:1px">Create</span></span></div>
<div style="position:absolute;left:181px;top:279px;width:172px;height:18px;padding-left:3px;overflow:hidden;white-space:pre;font:13px/18px 'Liberation Sans', sans-serif;color:#000;letter-spacing:-0.6px;"><span style="display:inline-block;height:18px;background:#fff"><span style="position:relative;top:1px">NX_APG0_BANK_ACCOUNTS</span></span></div>
<div style="position:absolute;left:357px;top:279px;width:159px;height:18px;padding-left:3px;overflow:hidden;white-space:pre;font:13px/18px 'Liberation Sans', sans-serif;color:#000;"><span style="display:inline-block;height:18px;background:#fff"><span style="position:relative;top:1px">NoetixViews - APG0 Bank Accounts</span></span></div>
<div style="position:absolute;left:520px;top:279px;width:96px;height:18px;padding-left:3px;overflow:hidden;white-space:pre;font:13px/18px 'Liberation Sans', sans-serif;color:#000;"><span style="display:inline-block;height:18px;background:#fff"><span style="position:relative;top:1px">AP Basic - Bank Accounts</span></span></div>
<div style="position:absolute;left:620px;top:279px;width:196px;height:18px;padding-left:3px;overflow:hidden;white-space:pre;font:13px/18px 'Liberation Sans', sans-serif;color:#000;"><span style="display:inline-block;height:18px;background:#fff"><span style="position:relative;top:1px">Payables</span></span></div>
<div style="position:absolute;left:820px;top:279px;width:1073px;height:18px;padding-left:3px;overflow:hidden;white-space:pre;font:13px/18px 'Liberation Sans', sans-serif;color:#000;letter-spacing:-0.08px;"><span style="display:inline-block;height:18px;background:#fff"><span style="position:relative;top:1px">SELECT A$Account_Name, A$Account_Number, A$Branch_Bank_Number, A$Chart_Of_Accounts_Name, A$Ledger_Name, A$Operating_Unit_Name, Account_Default_Currency_Code &quot;Account</span></span></div>
<div style="position:absolute;left:47px;top:319px;width:130px;height:18px;padding-left:3px;overflow:hidden;white-space:pre;font:13px/18px 'Liberation Sans', sans-serif;color:#000;"><span style="display:inline-block;height:18px;background:#fff"><span style="position:relative;top:1px">Create</span></span></div>
<div style="position:absolute;left:181px;top:319px;width:172px;height:18px;padding-left:3px;overflow:hidden;white-space:pre;font:13px/18px 'Liberation Sans', sans-serif;color:#000;letter-spacing:-0.6px;"><span style="display:inline-block;height:18px;background:#fff"><span style="position:relative;top:1px">NX_APG0_CHECKS</span></span></div>
<div style="position:absolute;left:357px;top:319px;width:159px;height:18px;padding-left:3px;overflow:hidden;white-space:pre;font:13px/18px 'Liberation Sans', sans-serif;color:#000;"><span style="display:inline-block;height:18px;background:#fff"><span style="position:relative;top:1px">NoetixViews - APG0 Checks</span></span></div>
<div style="position:absolute;left:520px;top:319px;width:96px;height:18px;padding-left:3px;overflow:hidden;white-space:pre;font:13px/18px 'Liberation Sans', sans-serif;color:#000;"><span style="display:inline-block;height:18px;background:#fff"><span style="position:relative;top:1px">AP Basic - Checks</span></span></div>
<div style="position:absolute;left:620px;top:319px;width:196px;height:18px;padding-left:3px;overflow:hidden;white-space:pre;font:13px/18px 'Liberation Sans', sans-serif;color:#000;"><span style="display:inline-block;height:18px;background:#fff"><span style="position:relative;top:1px">E4A Test Category</span></span></div>
<div style="position:absolute;left:820px;top:319px;width:1034px;height:18px;padding-left:3px;overflow:hidden;white-space:pre;font:13px/18px 'Liberation Sans', sans-serif;color:#000;letter-spacing:-0.08px;"><span style="display:inline-block;height:18px;background:#fff"><span style="position:relative;top:1px">SELECT A$Checkrun_Name, A$Chart_Of_Accounts_Name, A$Check_Date, A$Check_Number, A$Future_Pay_Due_Date, A$Ledger_Name, A$Operating_Unit_Name, Address_Line1 &quot;Address&quot;</span></span></div>
<div style="position:absolute;left:1858px;top:319px;width:35px;height:18px;padding-left:3px;overflow:hidden;white-space:pre;font:13px/18px 'Liberation Sans', sans-serif;color:#000;"><span style="display:inline-block;height:18px;background:#fff"><span style="position:relative;top:1px">Bank Account</span></span></div>
<div style="position:absolute;left:47px;top:439px;width:130px;height:18px;padding-left:3px;overflow:hidden;white-space:pre;font:13px/18px 'Liberation Sans', sans-serif;color:#000;"><span style="display:inline-block;height:18px;background:#fff"><span style="position:relative;top:1px">Create</span></span></div>
<div style="position:absolute;left:181px;top:439px;width:172px;height:18px;padding-left:3px;overflow:hidden;white-space:pre;font:13px/18px 'Liberation Sans', sans-serif;color:#000;letter-spacing:-0.6px;"><span style="display:inline-block;height:18px;background:#fff"><span style="position:relative;top:1px">NX_APG0_CREDIT_CARDS</span></span></div>
<div style="position:absolute;left:357px;top:439px;width:159px;height:18px;padding-left:3px;overflow:hidden;white-space:pre;font:13px/18px 'Liberation Sans', sans-serif;color:#000;"><span style="display:inline-block;height:18px;background:#fff"><span style="position:relative;top:1px">NoetixViews - APG0 Credit Cards</span></span></div>
<div style="position:absolute;left:520px;top:439px;width:96px;height:18px;padding-left:3px;overflow:hidden;white-space:pre;font:13px/18px 'Liberation Sans', sans-serif;color:#000;"><span style="display:inline-block;height:18px;background:#fff"><span style="position:relative;top:1px">AP Basic - Credit Cards</span></span></div>
<div style="position:absolute;left:620px;top:439px;width:196px;height:18px;padding-left:3px;overflow:hidden;white-space:pre;font:13px/18px 'Liberation Sans', sans-serif;color:#000;"><span style="display:inline-block;height:18px;background:#fff"><span style="position:relative;top:1px">Payables</span></span></div>
<div style="position:absolute;left:820px;top:439px;width:1034px;height:18px;padding-left:3px;overflow:hidden;white-space:pre;font:13px/18px 'Liberation Sans', sans-serif;color:#000;letter-spacing:-0.08px;"><span style="display:inline-block;height:18px;background:#fff"><span style="position:relative;top:1px">SELECT A$Chart_Of_Accounts_Name, A$Credit_Card_Number, A$Ledger_Name, A$Operating_Unit_Name, Card_Department &quot;Card Department&quot;, Card_Profile &quot;Card Profile&quot;, Card_Type</span></span></div>
<div style="position:absolute;left:1858px;top:439px;width:35px;height:18px;padding-left:3px;overflow:hidden;white-space:pre;font:13px/18px 'Liberation Sans', sans-serif;color:#000;"><span style="display:inline-block;height:18px;background:#fff"><span style="position:relative;top:1px">Employee</span></span></div>
<div style="position:absolute;left:47px;top:479px;width:130px;height:18px;padding-left:3px;overflow:hidden;white-space:pre;font:13px/18px 'Liberation Sans', sans-serif;color:#000;"><span style="display:inline-block;height:18px;background:#fff"><span style="position:relative;top:1px">Disable</span></span></div>
<div style="position:absolute;left:181px;top:479px;width:172px;height:18px;padding-left:3px;overflow:hidden;white-space:pre;font:13px/18px 'Liberation Sans', sans-serif;color:#000;letter-spacing:-0.6px;"><span style="display:inline-block;height:18px;background:#fff"><span style="position:relative;top:1px">NX_APG0_EXPENSE_REPORT_LINES</span></span></div>
<div style="position:absolute;left:357px;top:479px;width:159px;height:18px;padding-left:3px;overflow:hidden;white-space:pre;font:13px/18px 'Liberation Sans', sans-serif;color:#000;"><span style="display:inline-block;height:18px;background:#fff"><span style="position:relative;top:1px">NoetixViews - APG0 Expense Reports</span></span></div>
<div style="position:absolute;left:520px;top:479px;width:96px;height:18px;padding-left:3px;overflow:hidden;white-space:pre;font:13px/18px 'Liberation Sans', sans-serif;color:#000;"><span style="display:inline-block;height:18px;background:#fff"><span style="position:relative;top:1px">AP Value Added - Expense</span></span></div>
<div style="position:absolute;left:620px;top:479px;width:196px;height:18px;padding-left:3px;overflow:hidden;white-space:pre;font:13px/18px 'Liberation Sans', sans-serif;color:#000;"><span style="display:inline-block;height:18px;background:#fff"><span style="position:relative;top:1px">Payables</span></span></div>
<div style="position:absolute;left:820px;top:479px;width:1034px;height:18px;padding-left:3px;overflow:hidden;white-space:pre;font:13px/18px 'Liberation Sans', sans-serif;color:#000;letter-spacing:-0.08px;"><span style="display:inline-block;height:18px;background:#fff"><span style="position:relative;top:1px">SELECT A$Advance_Invoice_To_Apply, A$Chart_Of_Accounts_Name, A$Employee_Full_Name, A$Employee_Last_Name, A$Employee_Number, A$Ledger_Name, A$Operating_Unit_Name</span></span></div>
<div style="position:absolute;left:1858px;top:479px;width:35px;height:18px;padding-left:3px;overflow:hidden;white-space:pre;font:13px/18px 'Liberation Sans', sans-serif;color:#000;"><span style="display:inline-block;height:18px;background:#fff"><span style="position:relative;top:1px">Employee</span></span></div>
<div style="position:absolute;left:47px;top:519px;width:130px;height:18px;padding-left:3px;overflow:hidden;white-space:pre;font:13px/18px 'Liberation Sans', sans-serif;color:#000;"><span style="display:inline-block;height:18px;background:#fff"><span style="position:relative;top:1px">Update</span></span></div>
<div style="position:absolute;left:181px;top:519px;width:172px;height:18px;padding-left:3px;overflow:hidden;white-space:pre;font:13px/18px 'Liberation Sans', sans-serif;color:#000;letter-spacing:-0.6px;"><span style="display:inline-block;height:18px;background:#fff"><span style="position:relative;top:1px">NX_AP_INVOICE_LINE_DETAILS</span></span></div>
<div style="position:absolute;left:357px;top:519px;width:159px;height:18px;padding-left:3px;overflow:hidden;white-space:pre;font:13px/18px 'Liberation Sans', sans-serif;color:#000;"><span style="display:inline-block;height:18px;background:#fff"><span style="position:relative;top:1px">NoetixViews - APG0 Invoice Lines</span></span></div>
<div style="position:absolute;left:520px;top:519px;width:296px;height:18px;padding-left:3px;overflow:hidden;white-space:pre;font:13px/18px 'Liberation Sans', sans-serif;color:#000;"><span style="display:inline-block;height:18px;background:#fff"><span style="position:relative;top:1px">AP Basic - Invoice Lines and invoice tax lines information</span></span></div>
<div style="position:absolute;left:820px;top:519px;width:1073px;height:18px;padding-left:3px;overflow:hidden;white-space:pre;font:13px/18px 'Liberation Sans', sans-serif;color:#000;letter-spacing:-0.08px;"><span style="display:inline-block;height:18px;background:#fff"><span style="position:relative;top:1px">SELECT A$Chart_Of_Accounts_Name, A$Invoice_Date, A$Invoice_Number, A$Ledger_Name, A$Operating_Unit_Name, Approval_Status_Code &quot;Approval Status Code&quot;, Asset_Tracking_Flag</span></span></div>
<div style="position:absolute;left:47px;top:579px;width:130px;height:18px;padding-left:3px;overflow:hidden;white-space:pre;font:13px/18px 'Liberation Sans', sans-serif;color:#000;"><span style="display:inline-block;height:18px;background:#fff"><span style="position:relative;top:1px">Update</span></span></div>
<div style="position:absolute;left:181px;top:579px;width:172px;height:18px;padding-left:3px;overflow:hidden;white-space:pre;font:13px/18px 'Liberation Sans', sans-serif;color:#000;letter-spacing:-0.6px;"><span style="display:inline-block;height:18px;background:#fff"><span style="position:relative;top:1px">NX_AR_TRANSACTION_LINE_DETAILS</span></span></div>
<div style="position:absolute;left:357px;top:579px;width:159px;height:18px;padding-left:3px;overflow:hidden;white-space:pre;font:13px/18px 'Liberation Sans', sans-serif;color:#000;"><span style="display:inline-block;height:18px;background:#fff"><span style="position:relative;top:1px">NoetixViews - ARG0 Transaction Lines</span></span></div>
<div style="position:absolute;left:520px;top:579px;width:296px;height:18px;padding-left:3px;overflow:hidden;white-space:pre;font:13px/18px 'Liberation Sans', sans-serif;color:#000;"><span style="display:inline-block;height:18px;background:#fff"><span style="position:relative;top:1px">AR Basic - Transaction Line Details - Line, Freight, Tax</span></span></div>
<div style="position:absolute;left:820px;top:579px;width:1073px;height:18px;padding-left:3px;overflow:hidden;white-space:pre;font:13px/18px 'Liberation Sans', sans-serif;color:#000;letter-spacing:-0.08px;"><span style="display:inline-block;height:18px;background:#fff"><span style="position:relative;top:1px">SELECT A$Chart_Of_Accounts_Name, A$Ledger_Name, A$Operating_Unit_Name, A$Order_Number, A$Purchase_Order, A$Transaction_Batch, A$Transaction_Date, A$Transaction_Number</span></span></div>
<div style="position:absolute;left:47px;top:639px;width:130px;height:18px;padding-left:3px;overflow:hidden;white-space:pre;font:13px/18px 'Liberation Sans', sans-serif;color:#000;"><span style="display:inline-block;height:18px;background:#fff"><span style="position:relative;top:1px">Update</span></span></div>
<div style="position:absolute;left:181px;top:639px;width:172px;height:18px;padding-left:3px;overflow:hidden;white-space:pre;font:13px/18px 'Liberation Sans', sans-serif;color:#000;letter-spacing:-0.6px;"><span style="display:inline-block;height:18px;background:#fff"><span style="position:relative;top:1px">NX_FAG0_ASSETS</span></span></div>
<div style="position:absolute;left:357px;top:639px;width:159px;height:18px;padding-left:3px;overflow:hidden;white-space:pre;font:13px/18px 'Liberation Sans', sans-serif;color:#000;"><span style="display:inline-block;height:18px;background:#fff"><span style="position:relative;top:1px">NoetixViews - FAG0 Assets</span></span></div>
<div style="position:absolute;left:520px;top:639px;width:296px;height:18px;padding-left:3px;overflow:hidden;white-space:pre;font:13px/18px 'Liberation Sans', sans-serif;color:#000;"><span style="display:inline-block;height:18px;background:#fff"><span style="position:relative;top:1px">FA Basic - Active Asset Identification, Physical and Depreciation</span></span></div>
<div style="position:absolute;left:820px;top:639px;width:1073px;height:18px;padding-left:3px;overflow:hidden;white-space:pre;font:13px/18px 'Liberation Sans', sans-serif;color:#000;letter-spacing:-0.08px;"><span style="display:inline-block;height:18px;background:#fff"><span style="position:relative;top:1px">SELECT nv.A$Asset_Number, nv.A$Book_Name, nv.A$Chart_Of_Accounts_Name, nv.A$Created_By, nv.A$Last_Updated_By, nv.A$Ledger_Name, nv.A$Tag_Number, nv.AssetKey$Code_Combination</span></span></div>
<div style="position:absolute;left:47px;top:679px;width:130px;height:18px;padding-left:3px;overflow:hidden;white-space:pre;font:13px/18px 'Liberation Sans', sans-serif;color:#000;"><span style="display:inline-block;height:18px;background:#fff"><span style="position:relative;top:1px">Update</span></span></div>
<div style="position:absolute;left:181px;top:679px;width:172px;height:18px;padding-left:3px;overflow:hidden;white-space:pre;font:13px/18px 'Liberation Sans', sans-serif;color:#000;letter-spacing:-0.6px;"><span style="display:inline-block;height:18px;background:#fff"><span style="position:relative;top:1px">NX_PA_BUDGET_VERSIONS</span></span></div>
<div style="position:absolute;left:357px;top:679px;width:159px;height:18px;padding-left:3px;overflow:hidden;white-space:pre;font:13px/18px 'Liberation Sans', sans-serif;color:#000;"><span style="display:inline-block;height:18px;background:#fff"><span style="position:relative;top:1px">NoetixViews - PA Budget Versions</span></span></div>
<div style="position:absolute;left:520px;top:679px;width:296px;height:18px;padding-left:3px;overflow:hidden;white-space:pre;font:13px/18px 'Liberation Sans', sans-serif;color:#000;"><span style="display:inline-block;height:18px;background:#fff"><span style="position:relative;top:1px">Dave test report t  -- D. GRant 2/03/2017</span></span></div>
<div style="position:absolute;left:820px;top:679px;width:38px;height:18px;padding-left:3px;overflow:hidden;white-space:pre;font:13px/18px 'Liberation Sans', sans-serif;color:#000;letter-spacing:-0.08px;"><span style="display:inline-block;height:18px;background:#fff"><span style="position:relative;top:1px">T</span></span></div>
<div style="position:absolute;left:862px;top:679px;width:77px;height:18px;padding-right:2px;text-align:right;overflow:hidden;white-space:pre;font:13px/18px 'Liberation Sans', sans-serif;color:#000;"><span style="display:inline-block;height:18px;background:#fff"><span style="position:relative;top:1px">1</span></span></div>
<div style="position:absolute;left:942px;top:679px;width:119px;height:18px;padding-left:3px;overflow:hidden;white-space:pre;font:13px/18px 'Liberation Sans', sans-serif;color:#000;"><span style="display:inline-block;height:18px;background:#fff"><span style="position:relative;top:1px">Project_Number</span></span></div>
<div style="position:absolute;left:1065px;top:679px;width:89px;height:18px;padding-left:3px;overflow:hidden;white-space:pre;font:13px/18px 'Liberation Sans', sans-serif;color:#000;letter-spacing:-0.2px;"><span style="display:inline-block;height:18px;background:#fff"><span style="position:relative;top:1px">Select a Project</span></span></div>
<div style="position:absolute;left:1158px;top:679px;width:89px;height:18px;padding-left:3px;overflow:hidden;white-space:pre;font:13px/18px 'Liberation Sans', sans-serif;color:#000;"><span style="display:inline-block;height:18px;background:#fff"><span style="position:relative;top:1px">CHAR</span></span></div>
<div style="position:absolute;left:1251px;top:679px;width:73px;height:18px;padding-left:3px;overflow:hidden;white-space:pre;font:13px/18px 'Liberation Sans', sans-serif;color:#000;"><span style="display:inline-block;height:18px;background:#fff"><span style="position:relative;top:1px">No</span></span></div>
<div style="position:absolute;left:1328px;top:679px;width:91px;height:18px;padding-right:2px;text-align:right;overflow:hidden;white-space:pre;font:13px/18px 'Liberation Sans', sans-serif;color:#000;"><span style="display:inline-block;height:18px;background:#fff"><span style="position:relative;top:1px">0</span></span></div>
<div style="position:absolute;left:1624px;top:679px;width:104px;height:18px;padding-left:3px;overflow:hidden;white-space:pre;font:13px/18px 'Liberation Sans', sans-serif;color:#000;"><span style="display:inline-block;height:18px;background:#fff"><span style="position:relative;top:1px">Project_Number</span></span></div>
<div style="position:absolute;left:1732px;top:679px;width:161px;height:18px;padding-left:3px;overflow:hidden;white-space:pre;font:13px/18px 'Liberation Sans', sans-serif;color:#000;"><span style="display:inline-block;height:18px;background:#fff"><span style="position:relative;top:1px">No</span></span></div>
<div style="position:absolute;left:181px;top:739px;width:172px;height:18px;padding-left:3px;overflow:hidden;white-space:pre;font:13px/18px 'Liberation Sans', sans-serif;color:#000;letter-spacing:-0.6px;"><span style="display:inline-block;height:18px;background:#fff"><span style="position:relative;top:1px">NX_PA_COST_BUDGET_ACTUALS</span></span></div>
<div style="position:absolute;left:357px;top:739px;width:159px;height:18px;padding-left:3px;overflow:hidden;white-space:pre;font:13px/18px 'Liberation Sans', sans-serif;color:#000;"><span style="display:inline-block;height:18px;background:#fff"><span style="position:relative;top:1px">NoetixViews - PA Cost Budget</span></span></div>
<div style="position:absolute;left:520px;top:739px;width:296px;height:18px;padding-left:3px;overflow:hidden;white-space:pre;font:13px/18px 'Liberation Sans', sans-serif;color:#000;"><span style="display:inline-block;height:18px;background:#fff"><span style="position:relative;top:1px">Report definiition for CDM Smith Project Report  --</span></span></div>
<div style="position:absolute;left:820px;top:739px;width:38px;height:18px;padding-left:3px;overflow:hidden;white-space:pre;font:13px/18px 'Liberation Sans', sans-serif;color:#000;letter-spacing:-0.08px;"><span style="display:inline-block;height:18px;background:#fff"><span style="position:relative;top:1px">T</span></span></div>
<div style="position:absolute;left:862px;top:739px;width:77px;height:18px;padding-right:2px;text-align:right;overflow:hidden;white-space:pre;font:13px/18px 'Liberation Sans', sans-serif;color:#000;"><span style="display:inline-block;height:18px;background:#fff"><span style="position:relative;top:1px">1</span></span></div>
<div style="position:absolute;left:942px;top:739px;width:119px;height:18px;padding-left:3px;overflow:hidden;white-space:pre;font:13px/18px 'Liberation Sans', sans-serif;color:#000;"><span style="display:inline-block;height:18px;background:#fff"><span style="position:relative;top:1px">Project_Number</span></span></div>
<div style="position:absolute;left:1065px;top:739px;width:89px;height:18px;padding-left:3px;overflow:hidden;white-space:pre;font:13px/18px 'Liberation Sans', sans-serif;color:#000;letter-spacing:-0.2px;"><span style="display:inline-block;height:18px;background:#fff"><span style="position:relative;top:1px">Select a Project</span></span></div>
<div style="position:absolute;left:1158px;top:739px;width:89px;height:18px;padding-left:3px;overflow:hidden;white-space:pre;font:13px/18px 'Liberation Sans', sans-serif;color:#000;"><span style="display:inline-block;height:18px;background:#fff"><span style="position:relative;top:1px">CHAR</span></span></div>
<div style="position:absolute;left:1251px;top:739px;width:73px;height:18px;padding-left:3px;overflow:hidden;white-space:pre;font:13px/18px 'Liberation Sans', sans-serif;color:#000;"><span style="display:inline-block;height:18px;background:#fff"><span style="position:relative;top:1px">No</span></span></div>
<div style="position:absolute;left:1328px;top:739px;width:91px;height:18px;padding-right:2px;text-align:right;overflow:hidden;white-space:pre;font:13px/18px 'Liberation Sans', sans-serif;color:#000;"><span style="display:inline-block;height:18px;background:#fff"><span style="position:relative;top:1px">0</span></span></div>
<div style="position:absolute;left:1624px;top:739px;width:104px;height:18px;padding-left:3px;overflow:hidden;white-space:pre;font:13px/18px 'Liberation Sans', sans-serif;color:#000;"><span style="display:inline-block;height:18px;background:#fff"><span style="position:relative;top:1px">Project_Number</span></span></div>
<div style="position:absolute;left:1732px;top:739px;width:161px;height:18px;padding-left:3px;overflow:hidden;white-space:pre;font:13px/18px 'Liberation Sans', sans-serif;color:#000;"><span style="display:inline-block;height:18px;background:#fff"><span style="position:relative;top:1px">No</span></span></div>
<div style="position:absolute;left:181px;top:799px;width:172px;height:18px;padding-left:3px;overflow:hidden;white-space:pre;font:13px/18px 'Liberation Sans', sans-serif;color:#000;letter-spacing:-0.6px;"><span style="display:inline-block;height:18px;background:#fff"><span style="position:relative;top:1px">NX_PA_XXCDM_CST_BUD_ACT</span></span></div>
<div style="position:absolute;left:357px;top:799px;width:159px;height:18px;padding-left:3px;overflow:hidden;white-space:pre;font:13px/18px 'Liberation Sans', sans-serif;color:#000;"><span style="display:inline-block;height:18px;background:#fff"><span style="position:relative;top:1px">NoetixViews - PA Cost Budget</span></span></div>
<div style="position:absolute;left:520px;top:799px;width:296px;height:18px;padding-left:3px;overflow:hidden;white-space:pre;font:13px/18px 'Liberation Sans', sans-serif;color:#000;"><span style="display:inline-block;height:18px;background:#fff"><span style="position:relative;top:1px">Report definiition for CDM Smith Project Report  --</span></span></div>
<div style="position:absolute;left:820px;top:799px;width:38px;height:18px;padding-left:3px;overflow:hidden;white-space:pre;font:13px/18px 'Liberation Sans', sans-serif;color:#000;letter-spacing:-0.08px;"><span style="display:inline-block;height:18px;background:#fff"><span style="position:relative;top:1px">T</span></span></div>
<div style="position:absolute;left:862px;top:799px;width:77px;height:18px;padding-right:2px;text-align:right;overflow:hidden;white-space:pre;font:13px/18px 'Liberation Sans', sans-serif;color:#000;"><span style="display:inline-block;height:18px;background:#fff"><span style="position:relative;top:1px">1</span></span></div>
<div style="position:absolute;left:942px;top:799px;width:119px;height:18px;padding-left:3px;overflow:hidden;white-space:pre;font:13px/18px 'Liberation Sans', sans-serif;color:#000;"><span style="display:inline-block;height:18px;background:#fff"><span style="position:relative;top:1px">Project_Number</span></span></div>
<div style="position:absolute;left:1065px;top:799px;width:89px;height:18px;padding-left:3px;overflow:hidden;white-space:pre;font:13px/18px 'Liberation Sans', sans-serif;color:#000;letter-spacing:-0.2px;"><span style="display:inline-block;height:18px;background:#fff"><span style="position:relative;top:1px">Select a Project</span></span></div>
<div style="position:absolute;left:1158px;top:799px;width:89px;height:18px;padding-left:3px;overflow:hidden;white-space:pre;font:13px/18px 'Liberation Sans', sans-serif;color:#000;"><span style="display:inline-block;height:18px;background:#fff"><span style="position:relative;top:1px">CHAR</span></span></div>
<div style="position:absolute;left:1251px;top:799px;width:73px;height:18px;padding-left:3px;overflow:hidden;white-space:pre;font:13px/18px 'Liberation Sans', sans-serif;color:#000;"><span style="display:inline-block;height:18px;background:#fff"><span style="position:relative;top:1px">No</span></span></div>
<div style="position:absolute;left:1328px;top:799px;width:91px;height:18px;padding-right:2px;text-align:right;overflow:hidden;white-space:pre;font:13px/18px 'Liberation Sans', sans-serif;color:#000;"><span style="display:inline-block;height:18px;background:#fff"><span style="position:relative;top:1px">0</span></span></div>
<div style="position:absolute;left:1624px;top:799px;width:104px;height:18px;padding-left:3px;overflow:hidden;white-space:pre;font:13px/18px 'Liberation Sans', sans-serif;color:#000;"><span style="display:inline-block;height:18px;background:#fff"><span style="position:relative;top:1px">Project Number</span></span></div>
<div style="position:absolute;left:1732px;top:799px;width:161px;height:18px;padding-left:3px;overflow:hidden;white-space:pre;font:13px/18px 'Liberation Sans', sans-serif;color:#000;"><span style="display:inline-block;height:18px;background:#fff"><span style="position:relative;top:1px">No</span></span></div>
<div style="position:absolute;left:181px;top:859px;width:172px;height:18px;padding-left:3px;overflow:hidden;white-space:pre;font:13px/18px 'Liberation Sans', sans-serif;color:#000;letter-spacing:-0.6px;"><span style="display:inline-block;height:18px;background:#fff"><span style="position:relative;top:1px">NX_PA_PROJECT_MEMBERS</span></span></div>
<div style="position:absolute;left:357px;top:859px;width:159px;height:18px;padding-left:3px;overflow:hidden;white-space:pre;font:13px/18px 'Liberation Sans', sans-serif;color:#000;"><span style="display:inline-block;height:18px;background:#fff"><span style="position:relative;top:1px">NoetixViews - PA Project Members</span></span></div>
<div style="position:absolute;left:520px;top:859px;width:296px;height:18px;padding-left:3px;overflow:hidden;white-space:pre;font:13px/18px 'Liberation Sans', sans-serif;color:#000;"><span style="display:inline-block;height:18px;background:#fff"><span style="position:relative;top:1px">Report definiition for CDM Smith Project Report  --</span></span></div>
<div style="position:absolute;left:820px;top:859px;width:38px;height:18px;padding-left:3px;overflow:hidden;white-space:pre;font:13px/18px 'Liberation Sans', sans-serif;color:#000;letter-spacing:-0.08px;"><span style="display:inline-block;height:18px;background:#fff"><span style="position:relative;top:1px">T</span></span></div>
<div style="position:absolute;left:862px;top:859px;width:77px;height:18px;padding-right:2px;text-align:right;overflow:hidden;white-space:pre;font:13px/18px 'Liberation Sans', sans-serif;color:#000;"><span style="display:inline-block;height:18px;background:#fff"><span style="position:relative;top:1px">1</span></span></div>
<div style="position:absolute;left:942px;top:859px;width:119px;height:18px;padding-left:3px;overflow:hidden;white-space:pre;font:13px/18px 'Liberation Sans', sans-serif;color:#000;"><span style="display:inline-block;height:18px;background:#fff"><span style="position:relative;top:1px">Project_Number</span></span></div>
<div style="position:absolute;left:1065px;top:859px;width:89px;height:18px;padding-left:3px;overflow:hidden;white-space:pre;font:13px/18px 'Liberation Sans', sans-serif;color:#000;letter-spacing:-0.2px;"><span style="display:inline-block;height:18px;background:#fff"><span style="position:relative;top:1px">Select a Project</span></span></div>
<div style="position:absolute;left:1158px;top:859px;width:89px;height:18px;padding-left:3px;overflow:hidden;white-space:pre;font:13px/18px 'Liberation Sans', sans-serif;color:#000;"><span style="display:inline-block;height:18px;background:#fff"><span style="position:relative;top:1px">CHAR</span></span></div>
<div style="position:absolute;left:1251px;top:859px;width:73px;height:18px;padding-left:3px;overflow:hidden;white-space:pre;font:13px/18px 'Liberation Sans', sans-serif;color:#000;"><span style="display:inline-block;height:18px;background:#fff"><span style="position:relative;top:1px">No</span></span></div>
<div style="position:absolute;left:1328px;top:859px;width:91px;height:18px;padding-right:2px;text-align:right;overflow:hidden;white-space:pre;font:13px/18px 'Liberation Sans', sans-serif;color:#000;"><span style="display:inline-block;height:18px;background:#fff"><span style="position:relative;top:1px">0</span></span></div>
<div style="position:absolute;left:1624px;top:859px;width:104px;height:18px;padding-left:3px;overflow:hidden;white-space:pre;font:13px/18px 'Liberation Sans', sans-serif;color:#000;"><span style="display:inline-block;height:18px;background:#fff"><span style="position:relative;top:1px">Project_Number</span></span></div>
<div style="position:absolute;left:1732px;top:859px;width:161px;height:18px;padding-left:3px;overflow:hidden;white-space:pre;font:13px/18px 'Liberation Sans', sans-serif;color:#000;"><span style="display:inline-block;height:18px;background:#fff"><span style="position:relative;top:1px">No</span></span></div>
<div style="position:absolute;left:181px;top:919px;width:172px;height:18px;padding-left:3px;overflow:hidden;white-space:pre;font:13px/18px 'Liberation Sans', sans-serif;color:#000;letter-spacing:-0.6px;"><span style="display:inline-block;height:18px;background:#fff"><span style="position:relative;top:1px">NX_PA_PROJECTS</span></span></div>
<div style="position:absolute;left:357px;top:919px;width:159px;height:18px;padding-left:3px;overflow:hidden;white-space:pre;font:13px/18px 'Liberation Sans', sans-serif;color:#000;"><span style="display:inline-block;height:18px;background:#fff"><span style="position:relative;top:1px">NoetixViews - PA Projects</span></span></div>
<div style="position:absolute;left:520px;top:919px;width:296px;height:18px;padding-left:3px;overflow:hidden;white-space:pre;font:13px/18px 'Liberation Sans', sans-serif;color:#000;"><span style="display:inline-block;height:18px;background:#fff"><span style="position:relative;top:1px">Report definiition for CDM Smith Project Report  --</span></span></div>
<div style="position:absolute;left:820px;top:919px;width:38px;height:18px;padding-left:3px;overflow:hidden;white-space:pre;font:13px/18px 'Liberation Sans', sans-serif;color:#000;letter-spacing:-0.08px;"><span style="display:inline-block;height:18px;background:#fff"><span style="position:relative;top:1px">T</span></span></div>
<div style="position:absolute;left:862px;top:919px;width:77px;height:18px;padding-right:2px;text-align:right;overflow:hidden;white-space:pre;font:13px/18px 'Liberation Sans', sans-serif;color:#000;"><span style="display:inline-block;height:18px;background:#fff"><span style="position:relative;top:1px">1</span></span></div>
<div style="position:absolute;left:942px;top:919px;width:212px;height:18px;padding-left:3px;overflow:hidden;white-space:pre;font:13px/18px 'Liberation Sans', sans-serif;color:#000;"><span style="display:inline-block;height:18px;background:#fff"><span style="position:relative;top:1px">Project_Number</span></span></div>
<div style="position:absolute;left:1158px;top:919px;width:89px;height:18px;padding-left:3px;overflow:hidden;white-space:pre;font:13px/18px 'Liberation Sans', sans-serif;color:#000;"><span style="display:inline-block;height:18px;background:#fff"><span style="position:relative;top:1px">CHAR</span></span></div>
<div style="position:absolute;left:1251px;top:919px;width:73px;height:18px;padding-left:3px;overflow:hidden;white-space:pre;font:13px/18px 'Liberation Sans', sans-serif;color:#000;"><span style="display:inline-block;height:18px;background:#fff"><span style="position:relative;top:1px">No</span></span></div>
<div style="position:absolute;left:1328px;top:919px;width:91px;height:18px;padding-right:2px;text-align:right;overflow:hidden;white-space:pre;font:13px/18px 'Liberation Sans', sans-serif;color:#000;"><span style="display:inline-block;height:18px;background:#fff"><span style="position:relative;top:1px">0</span></span></div>
<div style="position:absolute;left:1624px;top:919px;width:104px;height:18px;padding-left:3px;overflow:hidden;white-space:pre;font:13px/18px 'Liberation Sans', sans-serif;color:#000;"><span style="display:inline-block;height:18px;background:#fff"><span style="position:relative;top:1px">Project_Number</span></span></div>
<div style="position:absolute;left:1732px;top:919px;width:161px;height:18px;padding-left:3px;overflow:hidden;white-space:pre;font:13px/18px 'Liberation Sans', sans-serif;color:#000;"><span style="display:inline-block;height:18px;background:#fff"><span style="position:relative;top:1px">No</span></span></div>
<div style="position:absolute;left:51px;top:153px;height:25px;line-height:25px;font:bold 16px/25px 'Liberation Sans', sans-serif;color:#fff;white-space:nowrap"><span style="position:relative;top:2px">Reports Wand Administrator Template</span></div>
<div style="position:absolute;left:51px;top:178px;height:19px;font:bold 12px/19px 'Liberation Sans', sans-serif;color:#fff;white-space:nowrap;overflow:hidden;"><span style="position:relative;top:2px">Processing</span></div>
<div style="position:absolute;left:185px;top:178px;height:19px;font:bold 12px/19px 'Liberation Sans', sans-serif;color:#fff;white-space:nowrap;overflow:hidden;"><span style="position:relative;top:2px">Program Information</span></div>
<div style="position:absolute;left:866px;top:178px;height:19px;font:bold 12px/19px 'Liberation Sans', sans-serif;color:#fff;white-space:nowrap;overflow:hidden;"><span style="position:relative;top:2px">Parameters</span></div>
<div style="position:absolute;left:1862px;top:178px;height:19px;font:bold 12px/19px 'Liberation Sans', sans-serif;color:#fff;white-space:nowrap;overflow:hidden;width:35px;"><span style="position:relative;top:2px">Filters</span></div>
<div style="position:absolute;left:47px;top:197px;width:73px;height:20px;text-align:center;font:13px/20px 'Liberation Sans', sans-serif;color:#000;white-space:nowrap;overflow:hidden"><span style="position:relative;top:2px">Action</span></div>
<div style="position:absolute;left:120px;top:197px;width:61px;height:20px;text-align:center;font:13px/20px 'Liberation Sans', sans-serif;color:#000;white-space:nowrap;overflow:hidden"><span style="position:relative;top:2px">Error</span></div>
<div style="position:absolute;left:181px;top:197px;width:176px;height:20px;text-align:center;font:13px/20px 'Liberation Sans', sans-serif;color:#000;white-space:nowrap;overflow:hidden"><span style="position:relative;top:2px">Short Name</span></div>
<div style="position:absolute;left:357px;top:197px;width:163px;height:20px;text-align:center;font:13px/20px 'Liberation Sans', sans-serif;color:#000;white-space:nowrap;overflow:hidden"><span style="position:relative;top:2px">Program</span></div>
<div style="position:absolute;left:520px;top:197px;width:100px;height:20px;text-align:center;font:13px/20px 'Liberation Sans', sans-serif;color:#000;white-space:nowrap;overflow:hidden"><span style="position:relative;top:2px">Description</span></div>
<div style="position:absolute;left:620px;top:197px;width:94px;height:20px;text-align:center;font:13px/20px 'Liberation Sans', sans-serif;color:#000;white-space:nowrap;overflow:hidden"><span style="position:relative;top:2px">Category</span></div>
<div style="position:absolute;left:714px;top:197px;width:106px;height:20px;text-align:center;font:13px/20px 'Liberation Sans', sans-serif;color:#000;white-space:nowrap;overflow:hidden"><span style="position:relative;top:2px">Stored Procedure</span></div>
<div style="position:absolute;left:820px;top:197px;width:42px;height:20px;text-align:center;font:13px/20px 'Liberation Sans', sans-serif;color:#000;white-space:nowrap;overflow:hidden"><span style="position:relative;top:2px">SQL</span></div>
<div style="position:absolute;left:862px;top:197px;width:80px;height:20px;text-align:center;font:13px/20px 'Liberation Sans', sans-serif;color:#000;white-space:nowrap;overflow:hidden"><span style="position:relative;top:2px">Param Seq</span></div>
<div style="position:absolute;left:942px;top:197px;width:123px;height:20px;text-align:center;font:13px/20px 'Liberation Sans', sans-serif;color:#000;white-space:nowrap;overflow:hidden"><span style="position:relative;top:2px">Param Name</span></div>
<div style="position:absolute;left:1065px;top:197px;width:93px;height:20px;text-align:center;font:13px/20px 'Liberation Sans', sans-serif;color:#000;white-space:nowrap;overflow:hidden"><span style="position:relative;top:2px">Param Descr</span></div>
<div style="position:absolute;left:1158px;top:197px;width:93px;height:20px;text-align:center;font:13px/20px 'Liberation Sans', sans-serif;color:#000;white-space:nowrap;overflow:hidden"><span style="position:relative;top:2px">Param Type</span></div>
<div style="position:absolute;left:1251px;top:197px;width:77px;height:20px;text-align:center;font:13px/20px 'Liberation Sans', sans-serif;color:#000;white-space:nowrap;overflow:hidden"><span style="position:relative;top:2px">Required</span></div>
<div style="position:absolute;left:1328px;top:197px;width:94px;height:20px;text-align:center;font:13px/20px 'Liberation Sans', sans-serif;color:#000;white-space:nowrap;overflow:hidden"><span style="position:relative;top:2px">Precision</span></div>
<div style="position:absolute;left:1422px;top:197px;width:94px;height:20px;text-align:center;font:13px/20px 'Liberation Sans', sans-serif;color:#000;white-space:nowrap;overflow:hidden"><span style="position:relative;top:2px">Param vs</span></div>
<div style="position:absolute;left:1516px;top:197px;width:108px;height:20px;text-align:center;font:13px/20px 'Liberation Sans', sans-serif;color:#000;white-space:nowrap;overflow:hidden"><span style="position:relative;top:2px">Param Default</span></div>
<div style="position:absolute;left:1624px;top:197px;width:108px;height:20px;text-align:center;font:13px/20px 'Liberation Sans', sans-serif;color:#000;white-space:nowrap;overflow:hidden"><span style="position:relative;top:2px">Param Prompt</span></div>
<div style="position:absolute;left:1732px;top:197px;width:126px;height:20px;text-align:center;font:13px/20px 'Liberation Sans', sans-serif;color:#000;white-space:nowrap;overflow:hidden"><span style="position:relative;top:2px">Stored Proc</span></div>
<div style="position:absolute;left:1866px;top:197px;width:31px;height:20px;font:13px/20px 'Liberation Sans', sans-serif;color:#000;white-space:nowrap;overflow:hidden"><span style="position:relative;top:2px">Filter</span></div>
<div style="position:absolute;left:181px;top:124px;width:1px;height:818px;background:#a6a6a6"></div>
<div style="position:absolute;left:46px;top:677px;width:71px;height:18px;border:2px solid #217346"></div>
<div style="position:absolute;left:117px;top:694px;width:4px;height:4px;background:#217346;border:1px solid #fff;border-right:0;border-bottom:0"></div>
<div style="position:absolute;left:84px;top:702px;width:33px;height:21px;background:#ffffe1;border:1px solid #a0a0a0;font:12px/21px 'Liberation Sans', sans-serif;color:#555;text-align:center">LOV</div>
<div style="position:absolute;left:1897px;top:124px;width:19px;height:818px;background:#f0f0f0"></div>
<div style="position:absolute;left:1897px;top:143px;width:1px;height:799px;background:#c8c8c8"></div>
<div style="position:absolute;left:1900px;top:125px;width:15px;height:15px;background:#fff;border:1px solid #d8d8d8;box-sizing:border-box"></div>
<svg style="position:absolute;left:1900px;top:125px" width="15" height="15"><polygon points="4,9 11,9 7.5,5.5" fill="#7a7a7a"/></svg>
<div style="position:absolute;left:1900px;top:927px;width:15px;height:15px;background:#fff;border:1px solid #d8d8d8;box-sizing:border-box"></div>
<svg style="position:absolute;left:1900px;top:927px" width="15" height="15"><polygon points="4,6 11,6 7.5,9.5" fill="#7a7a7a"/></svg>
<div style="position:absolute;left:1900px;top:607px;width:15px;height:128px;background:#fff;border:1px solid #c6c6c6;box-sizing:border-box"></div>
<div style="position:absolute;left:0px;top:942px;width:1916px;height:23px;background:#f0f0f0"></div>
<div style="position:absolute;left:0px;top:942px;width:1916px;height:1px;background:#c8c8c8"></div>
<div style="position:absolute;left:0px;top:964px;width:1916px;height:2px;background:#217346"></div>
<svg style="position:absolute;left:14px;top:944px" width="40" height="18"><polygon points="6,9 10,5.5 10,12.5" fill="#c6c6c6"/><polygon points="30,5.5 34,9 30,12.5" fill="#c6c6c6"/></svg>
<div style="position:absolute;left:81px;top:942px;width:105px;height:22px;background:#fff;border-bottom:0"></div>
<div style="position:absolute;left:81px;top:942px;width:1px;height:20px;background:#c8c8c8"></div>
<div style="position:absolute;left:185px;top:942px;width:1px;height:20px;background:#c8c8c8"></div>
<div style="position:absolute;left:81px;top:960px;width:105px;height:2px;background:#217346"></div>
<div style="position:absolute;left:81px;top:942px;width:105px;height:20px;text-align:center;font:bold 13px/20px 'Liberation Sans', sans-serif;color:#217346;letter-spacing:0.4px"><span style="position:relative;top:-1px">RW Template</span></div>
<svg style="position:absolute;left:210px;top:944px" width="22" height="20"><circle cx="11" cy="10" r="7.5" fill="none" stroke="#777" stroke-width="1.2"/><path d="M11 6v8M7 10h8" stroke="#666" stroke-width="1.4"/></svg>
<svg style="position:absolute;left:1145px;top:946px" width="6" height="16"><rect x="2" y="2" width="2" height="2" fill="#999"/><rect x="2" y="6" width="2" height="2" fill="#999"/><rect x="2" y="10" width="2" height="2" fill="#999"/></svg>
<div style="position:absolute;left:1162px;top:946px;width:734px;height:15px;background:#e6e6e6"></div>
<div style="position:absolute;left:1162px;top:946px;width:16px;height:15px;background:#fff;border:1px solid #c6c6c6;box-sizing:border-box"></div>
<div style="position:absolute;left:1177px;top:946px;width:581px;height:15px;background:#fff;border:1px solid #c6c6c6;box-sizing:border-box"></div>
<div style="position:absolute;left:1881px;top:946px;width:15px;height:15px;background:#fff;border:1px solid #d8d8d8;box-sizing:border-box"></div>
<svg style="position:absolute;left:1162px;top:946px" width="16" height="15"><polygon points="5,7.5 9,4 9,11" fill="#777"/></svg>
<svg style="position:absolute;left:1881px;top:946px" width="15" height="15"><polygon points="10,7.5 6,4 6,11" fill="#777"/></svg>
</body></html>
